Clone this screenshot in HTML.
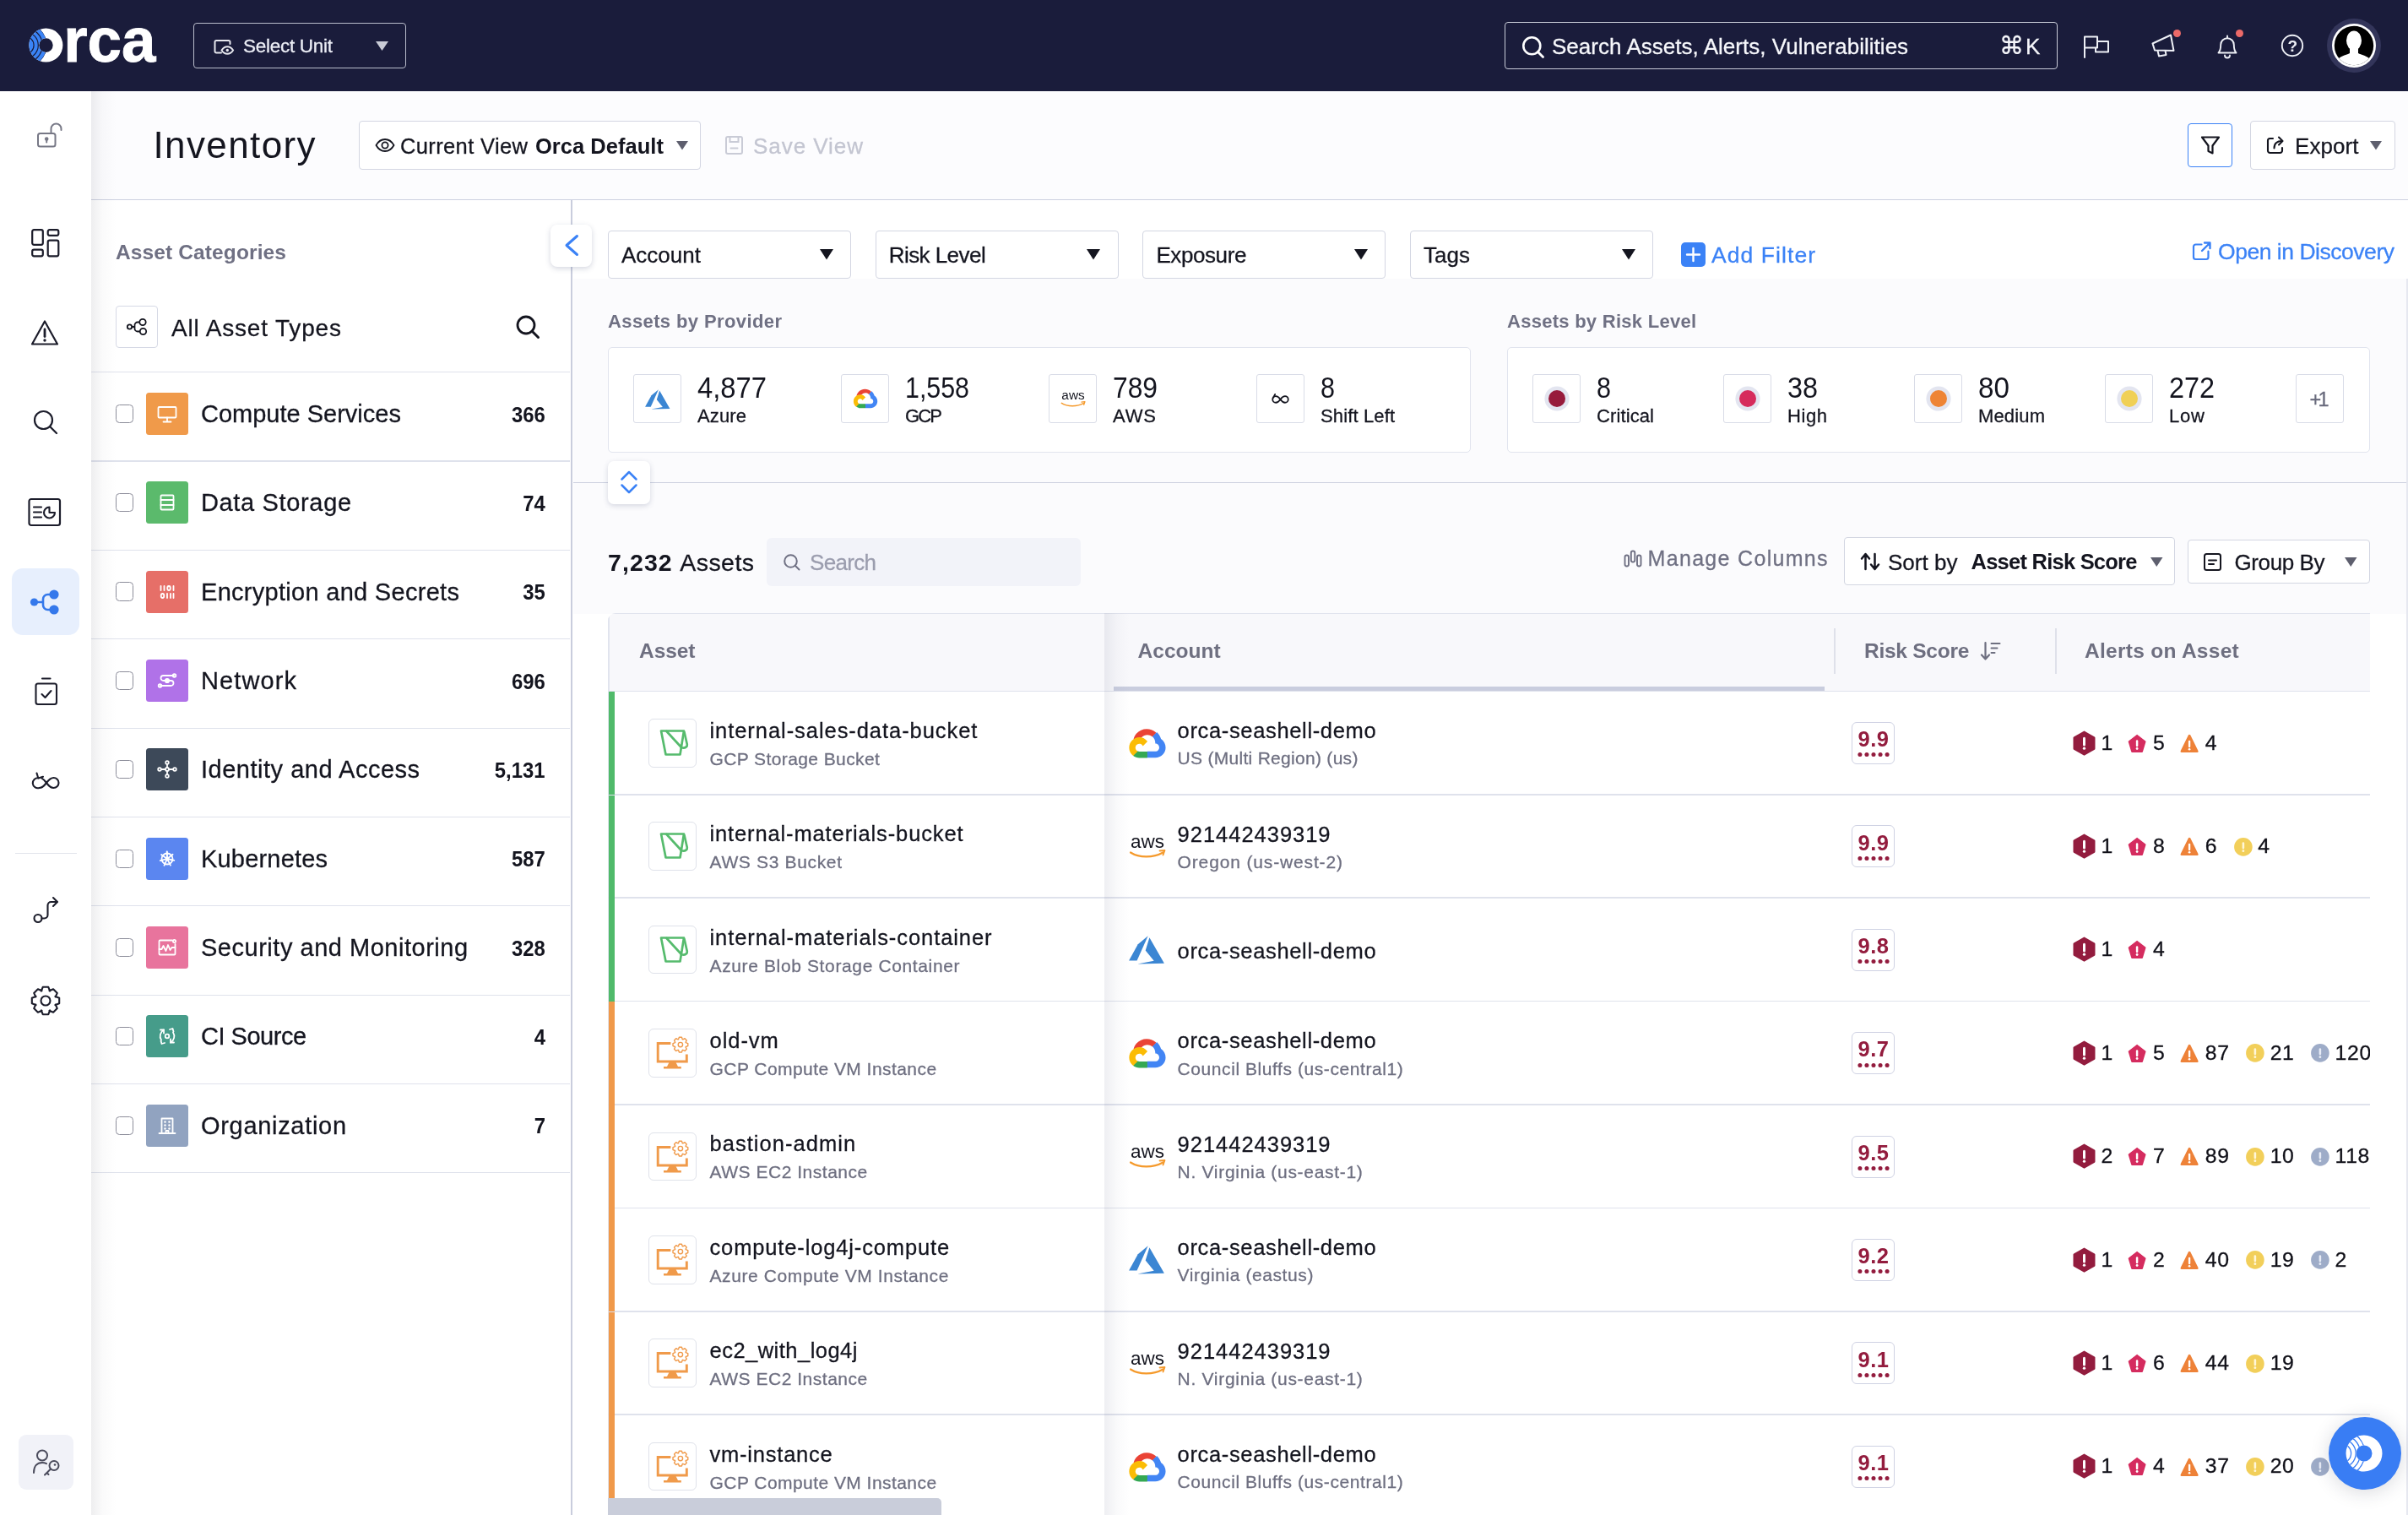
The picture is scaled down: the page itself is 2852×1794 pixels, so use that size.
<!DOCTYPE html>
<html lang="en"><head><meta charset="utf-8"><title>Inventory - Orca</title><style>
*{margin:0;padding:0}
html,body{width:2852px;height:1794px;overflow:hidden;background:#fff}
body{position:relative;will-change:transform;font-family:"Liberation Sans",Arial,sans-serif;color:#14151f}
.t{position:absolute;white-space:nowrap;line-height:1;font-weight:400;margin:0}
h1.t,h2.t,h3.t{font-weight:400}
svg{display:block;overflow:visible}
@media (max-width:1600px){html{zoom:.5}}
</style></head>
<body>
<div style="position:absolute;left:678.5px;top:237px;width:2173.5px;height:92.5px;background:#fff;"></div>
<div style="position:absolute;left:678.5px;top:329.5px;width:2173.5px;height:397px;background:#fbfbfd;"></div>
<div style="position:absolute;left:720px;top:273px;width:288px;height:56.5px;border:1.5px solid #d3d6e2;border-radius:4px;box-sizing:border-box;background:#fff;"></div>
<span class="t" style="top:289px;font-size:26px;left:736px;-webkit-text-stroke:.28px;color:#14151f;">Account</span>
<svg style="position:absolute;left:970.5px;top:295px;" width="16" height="12.5" viewBox="0 0 16 12.5" fill="none"><path d="M0 0H16L8 12.5Z" fill="#14151f"/></svg>
<div style="position:absolute;left:1036.7px;top:273px;width:288px;height:56.5px;border:1.5px solid #d3d6e2;border-radius:4px;box-sizing:border-box;background:#fff;"></div>
<span class="t" style="top:289px;font-size:26px;left:1052.7px;letter-spacing:-0.55px;-webkit-text-stroke:.28px;color:#14151f;">Risk Level</span>
<svg style="position:absolute;left:1287.2px;top:295px;" width="16" height="12.5" viewBox="0 0 16 12.5" fill="none"><path d="M0 0H16L8 12.5Z" fill="#14151f"/></svg>
<div style="position:absolute;left:1353.4px;top:273px;width:288px;height:56.5px;border:1.5px solid #d3d6e2;border-radius:4px;box-sizing:border-box;background:#fff;"></div>
<span class="t" style="top:289px;font-size:26px;left:1369.4px;letter-spacing:-0.41px;-webkit-text-stroke:.28px;color:#14151f;">Exposure</span>
<svg style="position:absolute;left:1603.9px;top:295px;" width="16" height="12.5" viewBox="0 0 16 12.5" fill="none"><path d="M0 0H16L8 12.5Z" fill="#14151f"/></svg>
<div style="position:absolute;left:1670.1px;top:273px;width:288px;height:56.5px;border:1.5px solid #d3d6e2;border-radius:4px;box-sizing:border-box;background:#fff;"></div>
<span class="t" style="top:289px;font-size:26px;left:1686.1px;letter-spacing:0.03px;-webkit-text-stroke:.28px;color:#14151f;">Tags</span>
<svg style="position:absolute;left:1920.6px;top:295px;" width="16" height="12.5" viewBox="0 0 16 12.5" fill="none"><path d="M0 0H16L8 12.5Z" fill="#14151f"/></svg>
<div style="position:absolute;left:1991px;top:287px;width:29px;height:29px;background:#3b82f6;border-radius:5px;"></div>
<svg style="position:absolute;left:1991px;top:287px;" width="29" height="29" viewBox="0 0 29 29" fill="none"><path d="M14.5 7V22M7 14.5H22" stroke="#fff" stroke-width="2.4" stroke-linecap="round"/></svg>
<span class="t" style="top:288.6px;font-size:26.5px;left:2027px;letter-spacing:1.07px;-webkit-text-stroke:.28px;color:#3b82f6;">Add Filter</span>
<svg style="position:absolute;left:2595px;top:285px;" width="25" height="25" viewBox="0 0 25 25" fill="none"><path d="M12.5 4.5H5.5A2.5 2.5 0 0 0 3 7v12.5A2.5 2.5 0 0 0 5.5 22H18a2.5 2.5 0 0 0 2.5-2.5V12.5" stroke="#3b82f6" stroke-width="2.2" stroke-linecap="round"/><path d="M16 2.5H22.5V9M22 3L13 12" stroke="#3b82f6" stroke-width="2.4" stroke-linecap="round" stroke-linejoin="round"/></svg>
<span class="t" style="top:285.1px;font-size:26.5px;left:2627px;letter-spacing:-0.47px;-webkit-text-stroke:.28px;color:#3b82f6;">Open in Discovery</span>
<h3 class="t" style="top:369.9px;font-size:22px;left:720px;letter-spacing:0.39px;font-weight:700;color:#6f7083;">Assets by Provider</h3>
<h3 class="t" style="top:369.9px;font-size:22px;left:1785px;letter-spacing:0.27px;font-weight:700;color:#6f7083;">Assets by Risk Level</h3>
<div style="position:absolute;left:720px;top:411px;width:1021.5px;height:124.5px;border:1.5px solid #e1e4ee;border-radius:5px;box-sizing:border-box;background:#fff;"></div>
<div style="position:absolute;left:1785px;top:411px;width:1021.5px;height:124.5px;border:1.5px solid #e1e4ee;border-radius:5px;box-sizing:border-box;background:#fff;"></div>
<div style="position:absolute;left:750px;top:443px;width:57px;height:57.5px;border:1.5px solid #d9dce7;border-radius:3px;box-sizing:border-box;background:#fff;"></div>
<svg style="position:absolute;left:764px;top:460.5px;" width="29.5" height="23.9" viewBox="0 0 42 34" fill="none"><path d="M22.7 .3L10.7 10.2L.1 29.6L9.6 29.4Z" fill="#3b86d3"/><path d="M24.4 2.3L41.9 32.8L10.3 33.5L29.7 29.8L19.7 17.6Z" fill="#3b86d3"/></svg>
<span class="t" style="top:441.3px;font-size:35px;left:826px;color:#14151f;transform:scaleX(0.9362);transform-origin:0 0;">4,877</span>
<span class="t" style="top:482.2px;font-size:22px;left:826px;letter-spacing:0.13px;-webkit-text-stroke:.28px;color:#14151f;">Azure</span>
<div style="position:absolute;left:996px;top:443px;width:57px;height:57.5px;border:1.5px solid #d9dce7;border-radius:3px;box-sizing:border-box;background:#fff;"></div>
<svg style="position:absolute;left:1009.5px;top:459.5px;" width="30" height="24.5" viewBox="0 0 44 36" fill="none"><path d="M28 10.2l3.6-3.6.2-1.5C25.3-.8 14.9 0 9.5 6.5 8 8.3 6.9 10.5 6.3 12.8l1.3-.2 7.2-1.2.6-.6c3.2-3.5 8.6-4 12.3-1z" fill="#ea4335"/>
<path d="M37.7 12.8c-.8-3-2.5-5.8-4.9-7.9l-5 5c2.1 1.7 3.3 4.3 3.3 7v.9c2.5 0 4.5 2 4.5 4.5s-2 4.5-4.5 4.5h-9l-.9.9v5.4l.9.9h9c6.5 0 11.8-5.1 11.8-11.6 0-3.9-1.9-7.6-5.2-9.8z" fill="#4285f4"/>
<path d="M13 34.1h9v-7.2h-9c-.6 0-1.3-.1-1.9-.4l-1.3.4-3.6 3.6-.3 1.2c2 1.5 4.5 2.4 7.1 2.4z" fill="#34a853"/>
<path d="M13 10.7C6.5 10.8 1.3 16.1 1.3 22.6c0 3.6 1.7 7 4.6 9.2l5.2-5.2c-2.3-1-3.3-3.7-2.3-5.9 1-2.3 3.7-3.3 5.9-2.3 1 .5 1.8 1.3 2.3 2.3l5.2-5.2C20 12.5 16.6 10.7 13 10.7z" fill="#fbbc05"/></svg>
<span class="t" style="top:441.3px;font-size:35px;left:1072px;color:#14151f;transform:scaleX(0.8677);transform-origin:0 0;">1,558</span>
<span class="t" style="top:482.2px;font-size:22px;left:1072px;letter-spacing:-1.84px;-webkit-text-stroke:.28px;color:#14151f;">GCP</span>
<div style="position:absolute;left:1242px;top:443px;width:57px;height:57.5px;border:1.5px solid #d9dce7;border-radius:3px;box-sizing:border-box;background:#fff;"></div>
<svg style="position:absolute;left:1255.5px;top:460px;" width="30" height="23.2" viewBox="0 0 44 34" fill="none"><text x="22" y="19.5" text-anchor="middle" font-family="Liberation Sans, sans-serif" font-size="22.5" fill="#14151f" textLength="40" lengthAdjust="spacingAndGlyphs">aws</text><path d="M2 25.5C12 32 29 32 40.5 25.5" stroke="#f59a2c" stroke-width="2.2" fill="none" stroke-linecap="round"/><path d="M36.5 23.5L42.5 23L40.5 28.5" stroke="#f59a2c" stroke-width="1.8" fill="none" stroke-linecap="round" stroke-linejoin="round"/></svg>
<span class="t" style="top:441.3px;font-size:35px;left:1318px;color:#14151f;transform:scaleX(0.9076);transform-origin:0 0;">789</span>
<span class="t" style="top:482.2px;font-size:22px;left:1318px;letter-spacing:0.85px;-webkit-text-stroke:.28px;color:#14151f;">AWS</span>
<div style="position:absolute;left:1488px;top:443px;width:57px;height:57.5px;border:1.5px solid #d9dce7;border-radius:3px;box-sizing:border-box;background:#fff;"></div>
<svg style="position:absolute;left:1505px;top:464px;" width="23" height="16.6" viewBox="0 0 36 26" fill="none"><path d="M18 14c-3 4-5 6-8.5 6a6 6 0 0 1 0-12c3.5 0 5.5 2 8.5 6s5 6 8.5 6a6 6 0 0 0 0-12c-3.5 0-5.5 2-8.5 6Z" stroke="#14151f" stroke-width="2.8" stroke-linejoin="round"/><path d="M5 10.5L8 4.5" stroke="#14151f" stroke-width="2.8" stroke-linecap="round"/></svg>
<span class="t" style="top:441.3px;font-size:35px;left:1564px;color:#14151f;transform:scaleX(0.8733);transform-origin:0 0;">8</span>
<span class="t" style="top:482.2px;font-size:22px;left:1564px;letter-spacing:0.13px;-webkit-text-stroke:.28px;color:#14151f;">Shift Left</span>
<div style="position:absolute;left:1815px;top:443px;width:57px;height:57.5px;border:1.5px solid #d9dce7;border-radius:3px;box-sizing:border-box;background:#fff;"></div>
<svg style="position:absolute;left:1828.5px;top:457px;" width="30" height="30" viewBox="0 0 30 30" fill="none"><circle cx="15" cy="15" r="14.6" fill="#e3e5f0"/><circle cx="15" cy="15" r="10" fill="#971b3c"/></svg>
<span class="t" style="top:441.3px;font-size:35px;left:1891px;color:#14151f;transform:scaleX(0.8733);transform-origin:0 0;">8</span>
<span class="t" style="top:482.2px;font-size:22px;left:1891px;letter-spacing:0.11px;-webkit-text-stroke:.28px;color:#14151f;">Critical</span>
<div style="position:absolute;left:2041px;top:443px;width:57px;height:57.5px;border:1.5px solid #d9dce7;border-radius:3px;box-sizing:border-box;background:#fff;"></div>
<svg style="position:absolute;left:2054.5px;top:457px;" width="30" height="30" viewBox="0 0 30 30" fill="none"><circle cx="15" cy="15" r="14.6" fill="#e3e5f0"/><circle cx="15" cy="15" r="10" fill="#d62b5c"/></svg>
<span class="t" style="top:441.3px;font-size:35px;left:2117px;color:#14151f;transform:scaleX(0.9247);transform-origin:0 0;">38</span>
<span class="t" style="top:482.2px;font-size:22px;left:2117px;letter-spacing:0.58px;-webkit-text-stroke:.28px;color:#14151f;">High</span>
<div style="position:absolute;left:2267px;top:443px;width:57px;height:57.5px;border:1.5px solid #d9dce7;border-radius:3px;box-sizing:border-box;background:#fff;"></div>
<svg style="position:absolute;left:2280.5px;top:457px;" width="30" height="30" viewBox="0 0 30 30" fill="none"><circle cx="15" cy="15" r="14.6" fill="#e3e5f0"/><circle cx="15" cy="15" r="10" fill="#ee8435"/></svg>
<span class="t" style="top:441.3px;font-size:35px;left:2343px;color:#14151f;transform:scaleX(0.9504);transform-origin:0 0;">80</span>
<span class="t" style="top:482.2px;font-size:22px;left:2343px;letter-spacing:0.15px;-webkit-text-stroke:.28px;color:#14151f;">Medium</span>
<div style="position:absolute;left:2493px;top:443px;width:57px;height:57.5px;border:1.5px solid #d9dce7;border-radius:3px;box-sizing:border-box;background:#fff;"></div>
<svg style="position:absolute;left:2506.5px;top:457px;" width="30" height="30" viewBox="0 0 30 30" fill="none"><circle cx="15" cy="15" r="14.6" fill="#e3e5f0"/><circle cx="15" cy="15" r="10" fill="#f0d056"/></svg>
<span class="t" style="top:441.3px;font-size:35px;left:2569px;color:#14151f;transform:scaleX(0.9247);transform-origin:0 0;">272</span>
<span class="t" style="top:482.2px;font-size:22px;left:2569px;letter-spacing:0.82px;-webkit-text-stroke:.28px;color:#14151f;">Low</span>
<div style="position:absolute;left:2719px;top:443px;width:57px;height:57.5px;border:1.5px solid #d9dce7;border-radius:3px;box-sizing:border-box;background:#fff;"></div>
<span class="t" style="top:461.6px;font-size:23.5px;left:2735.5px;letter-spacing:-3.79px;-webkit-text-stroke:.28px;color:#686a7c;">+1</span>
<div style="position:absolute;left:678.5px;top:571.2px;width:2171.5px;height:1.2px;background:#cdd1e0;"></div>
<div style="position:absolute;left:2850px;top:329.5px;width:2px;height:1464.5px;background:#e6e8f0;"></div>
<div style="position:absolute;left:720px;top:546px;width:49.5px;height:50.5px;background:#fff;border-radius:7px;box-shadow:0 2px 6px rgba(60,70,110,.2);"></div>
<svg style="position:absolute;left:734px;top:556px;" width="22" height="30" viewBox="0 0 22 30" fill="none"><path d="M2.5 11.5L11 3L19.5 11.5M2.5 18.5L11 27L19.5 18.5" stroke="#3b82f6" stroke-width="2.5" stroke-linecap="round" stroke-linejoin="round"/></svg>
<span class="t" style="top:651.9px;font-size:28.5px;left:720px;letter-spacing:1.1px;font-weight:700;color:#14151f;">7,232</span>
<span class="t" style="top:651.9px;font-size:28.5px;left:805.3px;letter-spacing:0.43px;-webkit-text-stroke:.28px;color:#14151f;">Assets</span>
<div style="position:absolute;left:908px;top:636.5px;width:372px;height:57px;background:#f2f3f9;border-radius:6px;"></div>
<svg style="position:absolute;left:927px;top:655px;" width="22" height="22" viewBox="0 0 22 22" fill="none"><circle cx="9.5" cy="9.5" r="7.3" stroke="#6f7083" stroke-width="2"/><path d="M15 15L19.5 19.5" stroke="#6f7083" stroke-width="2" stroke-linecap="round"/></svg>
<span class="t" style="top:653px;font-size:26px;left:959px;letter-spacing:-0.68px;-webkit-text-stroke:.28px;color:#9b9dae;">Search</span>
<svg style="position:absolute;left:1922px;top:650px;" width="24" height="24" viewBox="0 0 24 24" fill="none"><g stroke="#6f7083" stroke-width="1.9" fill="none"><rect x="2.5" y="7.5" width="4.5" height="13" rx="2.2"/><rect x="9.8" y="2.5" width="4.5" height="13" rx="2.2"/><rect x="17" y="7.5" width="4.5" height="13" rx="2.2"/></g></svg>
<span class="t" style="top:649.3px;font-size:25px;left:1951.6px;letter-spacing:1.31px;-webkit-text-stroke:.28px;color:#6f7083;">Manage Columns</span>
<div style="position:absolute;left:2184px;top:635.8px;width:391.5px;height:57.5px;border:1.5px solid #d3d6e2;border-radius:4px;box-sizing:border-box;background:#fff;"></div>
<svg style="position:absolute;left:2203px;top:653px;" width="24" height="24" viewBox="0 0 24 24" fill="none"><path d="M6.5 21V4M2 8.5L6.5 3L11 8.5M17.5 3V20M13 15.5L17.5 21L22 15.5" stroke="#14151f" stroke-width="2.5" stroke-linecap="round" stroke-linejoin="round"/></svg>
<span class="t" style="top:652.5px;font-size:26px;left:2236px;letter-spacing:0.02px;-webkit-text-stroke:.28px;color:#14151f;">Sort by</span>
<span class="t" style="top:652.9px;font-size:25.5px;left:2334.5px;letter-spacing:-0.76px;font-weight:700;color:#14151f;">Asset Risk Score</span>
<svg style="position:absolute;left:2547px;top:660px;" width="14.5" height="11" viewBox="0 0 14.5 11" fill="none"><path d="M0 0H14.5L7.25 11Z" fill="#5e5f6e"/></svg>
<div style="position:absolute;left:2591px;top:639px;width:215.5px;height:51.5px;border:1.5px solid #d3d6e2;border-radius:4px;box-sizing:border-box;background:#fff;"></div>
<svg style="position:absolute;left:2608.5px;top:654px;" width="23" height="23" viewBox="0 0 23 23" fill="none"><rect x="2" y="2" width="19" height="19" rx="2.5" stroke="#14151f" stroke-width="2"/><path d="M7 9.5H16M7 14H13" stroke="#14151f" stroke-width="2" stroke-linecap="round"/></svg>
<span class="t" style="top:653px;font-size:26px;left:2646.5px;letter-spacing:-0.4px;-webkit-text-stroke:.28px;color:#14151f;">Group By</span>
<svg style="position:absolute;left:2777px;top:660px;" width="14.5" height="11" viewBox="0 0 14.5 11" fill="none"><path d="M0 0H14.5L7.25 11Z" fill="#5e5f6e"/></svg>
<div style="position:absolute;left:720px;top:725.7px;width:2086.5px;height:1068.3px;overflow:hidden;border-top-left-radius:9px;background:#fff;">
<div style="position:absolute;left:0px;top:0px;width:2086.5px;height:92.7px;background:#f8f8fb;border-top:1.5px solid #e1e4ee;box-sizing:border-box;"></div>
<div style="position:absolute;left:0px;top:0px;width:1.5px;height:1100px;background:#e1e4ee;"></div>
<div style="position:absolute;left:1452px;top:18.3px;width:2px;height:54px;background:#dfe1ea;"></div>
<div style="position:absolute;left:1713.5px;top:18.3px;width:2px;height:54px;background:#dfe1ea;"></div>
<span class="t" style="top:33.6px;font-size:24.5px;left:37px;letter-spacing:-0.06px;font-weight:700;color:#6e6f80;">Asset</span>
<span class="t" style="top:33.6px;font-size:24.5px;left:627.5px;letter-spacing:0.03px;font-weight:700;color:#6e6f80;">Account</span>
<span class="t" style="top:33.6px;font-size:24.5px;left:1488px;letter-spacing:-0.26px;font-weight:700;color:#6e6f80;">Risk Score</span>
<svg style="position:absolute;left:1625px;top:32.3px;" width="25" height="26" viewBox="0 0 25 26" fill="none"><path d="M6.5 3V22M2 17.5L6.5 22.5L11 17.5" stroke="#6e6f80" stroke-width="2.2" stroke-linecap="round" stroke-linejoin="round" fill="none"/><path d="M13.5 4H23.5M13.5 9.5H20.5M13.5 15H17.5" stroke="#6e6f80" stroke-width="2" stroke-linecap="round"/></svg>
<span class="t" style="top:33.6px;font-size:24.5px;left:1749px;letter-spacing:0.28px;font-weight:700;color:#6e6f80;">Alerts on Asset</span>
<div style="position:absolute;left:0px;top:92px;width:2086.5px;height:1.5px;background:#dfe2ec;"></div>
<div style="position:absolute;left:599px;top:87.1px;width:842px;height:5.6px;background:#c9cdde;"></div>
<div style="position:absolute;left:0px;top:214.4px;width:2086.5px;height:1.5px;background:#dfe2ec;"></div>
<div style="position:absolute;left:0.7px;top:93.5px;width:7.3px;height:122.3px;background:#50ba6a;"></div>
<div style="position:absolute;left:48.2px;top:125.4px;width:56.5px;height:57.5px;border:1.5px solid #dfe2ea;border-radius:6px;box-sizing:border-box;background:#fff;"></div>
<svg style="position:absolute;left:48.2px;top:125.4px;" width="56.5" height="57.5" viewBox="0 0 56.5 57.5" fill="none"><g stroke="#56bb6d" stroke-width="2.7" fill="none" stroke-linejoin="round" stroke-linecap="round"><path d="M15 14.5H42L37.5 42.5H20.5Z"/><path d="M21.5 15L38.5 33.5"/><path d="M42.5 16L45.8 30.5c.500 2.5-2 4.5-5.5 4"/></g></svg>
<span class="t" style="top:127.1px;font-size:25.5px;left:120.5px;letter-spacing:0.94px;-webkit-text-stroke:.28px;color:#14151f;">internal-sales-data-bucket</span>
<span class="t" style="top:162.2px;font-size:21px;left:120.5px;letter-spacing:0.4px;-webkit-text-stroke:.28px;color:#6e6f80;">GCP Storage Bucket</span>
<svg style="position:absolute;left:615.6px;top:136.1px;" width="45.7" height="37.4" viewBox="0 0 44 36" fill="none"><path d="M28 10.2l3.6-3.6.2-1.5C25.3-.8 14.9 0 9.5 6.5 8 8.3 6.9 10.5 6.3 12.8l1.3-.2 7.2-1.2.6-.6c3.2-3.5 8.6-4 12.3-1z" fill="#ea4335"/>
<path d="M37.7 12.8c-.8-3-2.5-5.8-4.9-7.9l-5 5c2.1 1.7 3.3 4.3 3.3 7v.9c2.5 0 4.5 2 4.5 4.5s-2 4.5-4.5 4.5h-9l-.9.9v5.4l.9.9h9c6.5 0 11.8-5.1 11.8-11.6 0-3.9-1.9-7.6-5.2-9.8z" fill="#4285f4"/>
<path d="M13 34.1h9v-7.2h-9c-.6 0-1.3-.1-1.9-.4l-1.3.4-3.6 3.6-.3 1.2c2 1.5 4.5 2.4 7.1 2.4z" fill="#34a853"/>
<path d="M13 10.7C6.5 10.8 1.3 16.1 1.3 22.6c0 3.6 1.7 7 4.6 9.2l5.2-5.2c-2.3-1-3.3-3.7-2.3-5.9 1-2.3 3.7-3.3 5.9-2.3 1 .5 1.8 1.3 2.3 2.3l5.2-5.2C20 12.5 16.6 10.7 13 10.7z" fill="#fbbc05"/></svg>
<span class="t" style="top:127.6px;font-size:25.5px;left:674.6px;letter-spacing:0.65px;-webkit-text-stroke:.28px;color:#14151f;">orca-seashell-demo</span>
<span class="t" style="top:161.8px;font-size:21px;left:674.6px;letter-spacing:0.29px;-webkit-text-stroke:.28px;color:#6e6f80;">US (Multi Region) (us)</span>
<div style="position:absolute;left:1473.2px;top:129.3px;width:51px;height:50px;border:1.5px solid #cfd2e3;border-radius:6px;box-sizing:border-box;background:#fff;"></div>
<span class="t" style="top:137.6px;font-size:25.5px;left:1480.6px;letter-spacing:0.43px;font-weight:700;color:#931c3e;">9.9</span>
<svg style="position:absolute;left:1480px;top:165.7px;" width="38" height="5" viewBox="0 0 37.2 5" fill="none"><circle cx="2.5" cy="2.5" r="2.5" fill="#931c3e"/><circle cx="10.55" cy="2.5" r="2.5" fill="#931c3e"/><circle cx="18.6" cy="2.5" r="2.5" fill="#931c3e"/><circle cx="26.65" cy="2.5" r="2.5" fill="#931c3e"/><circle cx="34.7" cy="2.5" r="2.5" fill="#931c3e"/></svg>
<svg style="position:absolute;left:1735px;top:139px;" width="27" height="30.4" viewBox="0 0 27 30.4" fill="none"><path d="M13.5 .600L25.8 7.6Q26.5 8 26.5 8.8V21.6Q26.5 22.4 25.8 22.8L13.5 29.8L1.2 22.8Q.500 22.4 .500 21.6V8.8Q.500 8 1.2 7.6Z" fill="#931c3e"/><path d="M13.5 9.2V17" stroke="#fff" stroke-width="3" stroke-linecap="round"/><circle cx="13.5" cy="21.2" r="1.65" fill="#fff"/></svg>
<span class="t" style="top:142px;font-size:24.8px;left:1768.4px;letter-spacing:0.6px;-webkit-text-stroke:.28px;color:#101018;">1</span>
<svg style="position:absolute;left:1800.4px;top:143px;" width="22.2" height="22.8" viewBox="0 0 21.4 22" fill="none"><path d="M10.7 .800L20.4 8.2Q20.9 8.6 20.7 9.2L17.3 20.6Q17.1 21.3 16.4 21.3H5Q4.3 21.3 4.1 20.6L.700 9.2Q.500 8.6 1 8.2Z" fill="#d52c5f"/><path d="M10.7 8.3V13.54" stroke="#fff" stroke-width="2.4" stroke-linecap="round"/><circle cx="10.7" cy="16.9" r="1.35" fill="#fff"/></svg>
<span class="t" style="top:142px;font-size:24.8px;left:1830.1px;letter-spacing:0.6px;-webkit-text-stroke:.28px;color:#101018;">5</span>
<svg style="position:absolute;left:1862.1px;top:143.1px;" width="22.2" height="22.6" viewBox="0 0 21.6 22" fill="none"><path d="M10.8 1.2Q11.4 .400 12 1.4L21 19.8Q21.5 21.3 20 21.4H1.6Q.100 21.3 .600 19.8L9.6 1.4Q10.2 .400 10.8 1.2Z" fill="#ee8238"/><path d="M10.8 8.6V14.58" stroke="#fff" stroke-width="2.3" stroke-linecap="round"/><circle cx="10.8" cy="17.8" r="1.3" fill="#fff"/></svg>
<span class="t" style="top:142px;font-size:24.8px;left:1891.8px;letter-spacing:0.6px;-webkit-text-stroke:.28px;color:#101018;">4</span>
<div style="position:absolute;left:0px;top:336.8px;width:2086.5px;height:1.5px;background:#dfe2ec;"></div>
<div style="position:absolute;left:0.7px;top:215.9px;width:7.3px;height:122.3px;background:#50ba6a;"></div>
<div style="position:absolute;left:48.2px;top:247.8px;width:56.5px;height:57.5px;border:1.5px solid #dfe2ea;border-radius:6px;box-sizing:border-box;background:#fff;"></div>
<svg style="position:absolute;left:48.2px;top:247.8px;" width="56.5" height="57.5" viewBox="0 0 56.5 57.5" fill="none"><g stroke="#56bb6d" stroke-width="2.7" fill="none" stroke-linejoin="round" stroke-linecap="round"><path d="M15 14.5H42L37.5 42.5H20.5Z"/><path d="M21.5 15L38.5 33.5"/><path d="M42.5 16L45.8 30.5c.500 2.5-2 4.5-5.5 4"/></g></svg>
<span class="t" style="top:249.5px;font-size:25.5px;left:120.5px;letter-spacing:0.87px;-webkit-text-stroke:.28px;color:#14151f;">internal-materials-bucket</span>
<span class="t" style="top:284.6px;font-size:21px;left:120.5px;letter-spacing:0.66px;-webkit-text-stroke:.28px;color:#6e6f80;">AWS S3 Bucket</span>
<svg style="position:absolute;left:617px;top:258.6px;" width="44" height="34" viewBox="0 0 44 34" fill="none"><text x="22" y="19.5" text-anchor="middle" font-family="Liberation Sans, sans-serif" font-size="22.5" fill="#14151f" textLength="40" lengthAdjust="spacingAndGlyphs">aws</text><path d="M2 25.5C12 32 29 32 40.5 25.5" stroke="#f59a2c" stroke-width="2.2" fill="none" stroke-linecap="round"/><path d="M36.5 23.5L42.5 23L40.5 28.5" stroke="#f59a2c" stroke-width="1.8" fill="none" stroke-linecap="round" stroke-linejoin="round"/></svg>
<span class="t" style="top:250px;font-size:25.5px;left:674.6px;letter-spacing:0.98px;-webkit-text-stroke:.28px;color:#14151f;">921442439319</span>
<span class="t" style="top:284.2px;font-size:21px;left:674.6px;letter-spacing:0.85px;-webkit-text-stroke:.28px;color:#6e6f80;">Oregon (us-west-2)</span>
<div style="position:absolute;left:1473.2px;top:251.7px;width:51px;height:50px;border:1.5px solid #cfd2e3;border-radius:6px;box-sizing:border-box;background:#fff;"></div>
<span class="t" style="top:260px;font-size:25.5px;left:1480.6px;letter-spacing:0.43px;font-weight:700;color:#931c3e;">9.9</span>
<svg style="position:absolute;left:1480px;top:288.1px;" width="38" height="5" viewBox="0 0 37.2 5" fill="none"><circle cx="2.5" cy="2.5" r="2.5" fill="#931c3e"/><circle cx="10.55" cy="2.5" r="2.5" fill="#931c3e"/><circle cx="18.6" cy="2.5" r="2.5" fill="#931c3e"/><circle cx="26.65" cy="2.5" r="2.5" fill="#931c3e"/><circle cx="34.7" cy="2.5" r="2.5" fill="#931c3e"/></svg>
<svg style="position:absolute;left:1735px;top:261.4px;" width="27" height="30.4" viewBox="0 0 27 30.4" fill="none"><path d="M13.5 .600L25.8 7.6Q26.5 8 26.5 8.8V21.6Q26.5 22.4 25.8 22.8L13.5 29.8L1.2 22.8Q.500 22.4 .500 21.6V8.8Q.500 8 1.2 7.6Z" fill="#931c3e"/><path d="M13.5 9.2V17" stroke="#fff" stroke-width="3" stroke-linecap="round"/><circle cx="13.5" cy="21.2" r="1.65" fill="#fff"/></svg>
<span class="t" style="top:264.4px;font-size:24.8px;left:1768.4px;letter-spacing:0.6px;-webkit-text-stroke:.28px;color:#101018;">1</span>
<svg style="position:absolute;left:1800.4px;top:265.4px;" width="22.2" height="22.8" viewBox="0 0 21.4 22" fill="none"><path d="M10.7 .800L20.4 8.2Q20.9 8.6 20.7 9.2L17.3 20.6Q17.1 21.3 16.4 21.3H5Q4.3 21.3 4.1 20.6L.700 9.2Q.500 8.6 1 8.2Z" fill="#d52c5f"/><path d="M10.7 8.3V13.54" stroke="#fff" stroke-width="2.4" stroke-linecap="round"/><circle cx="10.7" cy="16.9" r="1.35" fill="#fff"/></svg>
<span class="t" style="top:264.4px;font-size:24.8px;left:1830.1px;letter-spacing:0.6px;-webkit-text-stroke:.28px;color:#101018;">8</span>
<svg style="position:absolute;left:1862.1px;top:265.5px;" width="22.2" height="22.6" viewBox="0 0 21.6 22" fill="none"><path d="M10.8 1.2Q11.4 .400 12 1.4L21 19.8Q21.5 21.3 20 21.4H1.6Q.100 21.3 .600 19.8L9.6 1.4Q10.2 .400 10.8 1.2Z" fill="#ee8238"/><path d="M10.8 8.6V14.58" stroke="#fff" stroke-width="2.3" stroke-linecap="round"/><circle cx="10.8" cy="17.8" r="1.3" fill="#fff"/></svg>
<span class="t" style="top:264.4px;font-size:24.8px;left:1891.8px;letter-spacing:0.6px;-webkit-text-stroke:.28px;color:#101018;">6</span>
<svg style="position:absolute;left:1925.7px;top:266px;" width="21.8" height="21.8" viewBox="0 0 21.4 21.4" fill="none"><circle cx="10.7" cy="10.7" r="10.6" fill="#f2cf5a"/><path d="M10.7 6.4V11.9" stroke="#fff6d8" stroke-width="2.5" stroke-linecap="round"/><circle cx="10.7" cy="15.4" r="1.4" fill="#fff6d8"/></svg>
<span class="t" style="top:264.4px;font-size:24.8px;left:1954.3px;letter-spacing:0.6px;-webkit-text-stroke:.28px;color:#101018;">4</span>
<div style="position:absolute;left:0px;top:459.2px;width:2086.5px;height:1.5px;background:#dfe2ec;"></div>
<div style="position:absolute;left:0.7px;top:338.3px;width:7.3px;height:122.3px;background:#50ba6a;"></div>
<div style="position:absolute;left:48.2px;top:370.2px;width:56.5px;height:57.5px;border:1.5px solid #dfe2ea;border-radius:6px;box-sizing:border-box;background:#fff;"></div>
<svg style="position:absolute;left:48.2px;top:370.2px;" width="56.5" height="57.5" viewBox="0 0 56.5 57.5" fill="none"><g stroke="#56bb6d" stroke-width="2.7" fill="none" stroke-linejoin="round" stroke-linecap="round"><path d="M15 14.5H42L37.5 42.5H20.5Z"/><path d="M21.5 15L38.5 33.5"/><path d="M42.5 16L45.8 30.5c.500 2.5-2 4.5-5.5 4"/></g></svg>
<span class="t" style="top:371.9px;font-size:25.5px;left:120.5px;letter-spacing:0.93px;-webkit-text-stroke:.28px;color:#14151f;">internal-materials-container</span>
<span class="t" style="top:407px;font-size:21px;left:120.5px;letter-spacing:0.63px;-webkit-text-stroke:.28px;color:#6e6f80;">Azure Blob Storage Container</span>
<svg style="position:absolute;left:617px;top:382.5px;" width="42" height="34" viewBox="0 0 42 34" fill="none"><path d="M22.7 .3L10.7 10.2L.1 29.6L9.6 29.4Z" fill="#3b86d3"/><path d="M24.4 2.3L41.9 32.8L10.3 33.5L29.7 29.8L19.7 17.6Z" fill="#3b86d3"/></svg>
<span class="t" style="top:388.1px;font-size:25.5px;left:674.6px;letter-spacing:0.65px;-webkit-text-stroke:.28px;color:#14151f;">orca-seashell-demo</span>
<div style="position:absolute;left:1473.2px;top:374.1px;width:51px;height:50px;border:1.5px solid #cfd2e3;border-radius:6px;box-sizing:border-box;background:#fff;"></div>
<span class="t" style="top:382.4px;font-size:25.5px;left:1480.6px;letter-spacing:0.43px;font-weight:700;color:#931c3e;">9.8</span>
<svg style="position:absolute;left:1480px;top:410.5px;" width="38" height="5" viewBox="0 0 37.2 5" fill="none"><circle cx="2.5" cy="2.5" r="2.5" fill="#931c3e"/><circle cx="10.55" cy="2.5" r="2.5" fill="#931c3e"/><circle cx="18.6" cy="2.5" r="2.5" fill="#931c3e"/><circle cx="26.65" cy="2.5" r="2.5" fill="#931c3e"/><circle cx="34.7" cy="2.5" r="2.5" fill="#931c3e"/></svg>
<svg style="position:absolute;left:1735px;top:383.8px;" width="27" height="30.4" viewBox="0 0 27 30.4" fill="none"><path d="M13.5 .600L25.8 7.6Q26.5 8 26.5 8.8V21.6Q26.5 22.4 25.8 22.8L13.5 29.8L1.2 22.8Q.500 22.4 .500 21.6V8.8Q.500 8 1.2 7.6Z" fill="#931c3e"/><path d="M13.5 9.2V17" stroke="#fff" stroke-width="3" stroke-linecap="round"/><circle cx="13.5" cy="21.2" r="1.65" fill="#fff"/></svg>
<span class="t" style="top:386.8px;font-size:24.8px;left:1768.4px;letter-spacing:0.6px;-webkit-text-stroke:.28px;color:#101018;">1</span>
<svg style="position:absolute;left:1800.4px;top:387.8px;" width="22.2" height="22.8" viewBox="0 0 21.4 22" fill="none"><path d="M10.7 .800L20.4 8.2Q20.9 8.6 20.7 9.2L17.3 20.6Q17.1 21.3 16.4 21.3H5Q4.3 21.3 4.1 20.6L.700 9.2Q.500 8.6 1 8.2Z" fill="#d52c5f"/><path d="M10.7 8.3V13.54" stroke="#fff" stroke-width="2.4" stroke-linecap="round"/><circle cx="10.7" cy="16.9" r="1.35" fill="#fff"/></svg>
<span class="t" style="top:386.8px;font-size:24.8px;left:1830.1px;letter-spacing:0.6px;-webkit-text-stroke:.28px;color:#101018;">4</span>
<div style="position:absolute;left:0px;top:581.6px;width:2086.5px;height:1.5px;background:#dfe2ec;"></div>
<div style="position:absolute;left:0.7px;top:460.7px;width:7.3px;height:122.3px;background:#f0994a;"></div>
<div style="position:absolute;left:48.2px;top:492.6px;width:56.5px;height:57.5px;border:1.5px solid #dfe2ea;border-radius:6px;box-sizing:border-box;background:#fff;"></div>
<svg style="position:absolute;left:48.2px;top:492.6px;" width="56.5" height="57.5" viewBox="0 0 56.5 57.5" fill="none"><path d="M26.4 17.5H11.2V39H45.3V30.6" stroke="#f09a4a" stroke-width="2.9" fill="none"/><path d="M24.5 40H32.5L35 45H38.8V47.4H18V45H22Z" fill="#f09a4a"/><path d="M36.38 10.23L39.42 10.23L40.3 12.74L40.71 12.91L43.1 11.75L45.25 13.9L44.09 16.29L44.26 16.7L46.77 17.58L46.77 20.62L44.26 21.5L44.09 21.91L45.25 24.3L43.1 26.45L40.71 25.29L40.3 25.46L39.42 27.97L36.38 27.97L35.5 25.46L35.09 25.29L32.7 26.45L30.55 24.3L31.71 21.91L31.54 21.5L29.03 20.62L29.03 17.58L31.54 16.7L31.71 16.29L30.55 13.9L32.7 11.75L35.09 12.91L35.5 12.74Z" stroke="#f09a4a" stroke-width="1.4" fill="none" stroke-linejoin="round"/><circle cx="37.9" cy="19.1" r="2.7" stroke="#f09a4a" stroke-width="1.4" fill="none"/></svg>
<span class="t" style="top:494.3px;font-size:25.5px;left:120.5px;letter-spacing:0.96px;-webkit-text-stroke:.28px;color:#14151f;">old-vm</span>
<span class="t" style="top:529.4px;font-size:21px;left:120.5px;letter-spacing:0.45px;-webkit-text-stroke:.28px;color:#6e6f80;">GCP Compute VM Instance</span>
<svg style="position:absolute;left:615.6px;top:503.3px;" width="45.7" height="37.4" viewBox="0 0 44 36" fill="none"><path d="M28 10.2l3.6-3.6.2-1.5C25.3-.8 14.9 0 9.5 6.5 8 8.3 6.9 10.5 6.3 12.8l1.3-.2 7.2-1.2.6-.6c3.2-3.5 8.6-4 12.3-1z" fill="#ea4335"/>
<path d="M37.7 12.8c-.8-3-2.5-5.8-4.9-7.9l-5 5c2.1 1.7 3.3 4.3 3.3 7v.9c2.5 0 4.5 2 4.5 4.5s-2 4.5-4.5 4.5h-9l-.9.9v5.4l.9.9h9c6.5 0 11.8-5.1 11.8-11.6 0-3.9-1.9-7.6-5.2-9.8z" fill="#4285f4"/>
<path d="M13 34.1h9v-7.2h-9c-.6 0-1.3-.1-1.9-.4l-1.3.4-3.6 3.6-.3 1.2c2 1.5 4.5 2.4 7.1 2.4z" fill="#34a853"/>
<path d="M13 10.7C6.5 10.8 1.3 16.1 1.3 22.6c0 3.6 1.7 7 4.6 9.2l5.2-5.2c-2.3-1-3.3-3.7-2.3-5.9 1-2.3 3.7-3.3 5.9-2.3 1 .5 1.8 1.3 2.3 2.3l5.2-5.2C20 12.5 16.6 10.7 13 10.7z" fill="#fbbc05"/></svg>
<span class="t" style="top:494.8px;font-size:25.5px;left:674.6px;letter-spacing:0.65px;-webkit-text-stroke:.28px;color:#14151f;">orca-seashell-demo</span>
<span class="t" style="top:529px;font-size:21px;left:674.6px;letter-spacing:0.57px;-webkit-text-stroke:.28px;color:#6e6f80;">Council Bluffs (us-central1)</span>
<div style="position:absolute;left:1473.2px;top:496.5px;width:51px;height:50px;border:1.5px solid #cfd2e3;border-radius:6px;box-sizing:border-box;background:#fff;"></div>
<span class="t" style="top:504.8px;font-size:25.5px;left:1480.6px;letter-spacing:0.43px;font-weight:700;color:#931c3e;">9.7</span>
<svg style="position:absolute;left:1480px;top:532.9px;" width="38" height="5" viewBox="0 0 37.2 5" fill="none"><circle cx="2.5" cy="2.5" r="2.5" fill="#931c3e"/><circle cx="10.55" cy="2.5" r="2.5" fill="#931c3e"/><circle cx="18.6" cy="2.5" r="2.5" fill="#931c3e"/><circle cx="26.65" cy="2.5" r="2.5" fill="#931c3e"/><circle cx="34.7" cy="2.5" r="2.5" fill="#931c3e"/></svg>
<svg style="position:absolute;left:1735px;top:506.2px;" width="27" height="30.4" viewBox="0 0 27 30.4" fill="none"><path d="M13.5 .600L25.8 7.6Q26.5 8 26.5 8.8V21.6Q26.5 22.4 25.8 22.8L13.5 29.8L1.2 22.8Q.500 22.4 .500 21.6V8.8Q.500 8 1.2 7.6Z" fill="#931c3e"/><path d="M13.5 9.2V17" stroke="#fff" stroke-width="3" stroke-linecap="round"/><circle cx="13.5" cy="21.2" r="1.65" fill="#fff"/></svg>
<span class="t" style="top:509.2px;font-size:24.8px;left:1768.4px;letter-spacing:0.6px;-webkit-text-stroke:.28px;color:#101018;">1</span>
<svg style="position:absolute;left:1800.4px;top:510.2px;" width="22.2" height="22.8" viewBox="0 0 21.4 22" fill="none"><path d="M10.7 .800L20.4 8.2Q20.9 8.6 20.7 9.2L17.3 20.6Q17.1 21.3 16.4 21.3H5Q4.3 21.3 4.1 20.6L.700 9.2Q.500 8.6 1 8.2Z" fill="#d52c5f"/><path d="M10.7 8.3V13.54" stroke="#fff" stroke-width="2.4" stroke-linecap="round"/><circle cx="10.7" cy="16.9" r="1.35" fill="#fff"/></svg>
<span class="t" style="top:509.2px;font-size:24.8px;left:1830.1px;letter-spacing:0.6px;-webkit-text-stroke:.28px;color:#101018;">5</span>
<svg style="position:absolute;left:1862.1px;top:510.3px;" width="22.2" height="22.6" viewBox="0 0 21.6 22" fill="none"><path d="M10.8 1.2Q11.4 .400 12 1.4L21 19.8Q21.5 21.3 20 21.4H1.6Q.100 21.3 .600 19.8L9.6 1.4Q10.2 .400 10.8 1.2Z" fill="#ee8238"/><path d="M10.8 8.6V14.58" stroke="#fff" stroke-width="2.3" stroke-linecap="round"/><circle cx="10.8" cy="17.8" r="1.3" fill="#fff"/></svg>
<span class="t" style="top:509.2px;font-size:24.8px;left:1891.8px;letter-spacing:0.6px;-webkit-text-stroke:.28px;color:#101018;">87</span>
<svg style="position:absolute;left:1940.1px;top:510.8px;" width="21.8" height="21.8" viewBox="0 0 21.4 21.4" fill="none"><circle cx="10.7" cy="10.7" r="10.6" fill="#f2cf5a"/><path d="M10.7 6.4V11.9" stroke="#fff6d8" stroke-width="2.5" stroke-linecap="round"/><circle cx="10.7" cy="15.4" r="1.4" fill="#fff6d8"/></svg>
<span class="t" style="top:509.2px;font-size:24.8px;left:1968.7px;letter-spacing:0.6px;-webkit-text-stroke:.28px;color:#101018;">21</span>
<svg style="position:absolute;left:2017px;top:510.8px;" width="21.8" height="21.8" viewBox="0 0 21.4 21.4" fill="none"><circle cx="10.7" cy="10.7" r="10.6" fill="#9eacc8"/><path d="M10.7 6.4V11.9" stroke="#e8ecf6" stroke-width="2.5" stroke-linecap="round"/><circle cx="10.7" cy="15.4" r="1.4" fill="#e8ecf6"/></svg>
<span class="t" style="top:509.2px;font-size:24.8px;left:2045.6px;letter-spacing:0.6px;-webkit-text-stroke:.28px;color:#101018;">120</span>
<div style="position:absolute;left:0px;top:704px;width:2086.5px;height:1.5px;background:#dfe2ec;"></div>
<div style="position:absolute;left:0.7px;top:583.1px;width:7.3px;height:122.3px;background:#f0994a;"></div>
<div style="position:absolute;left:48.2px;top:615px;width:56.5px;height:57.5px;border:1.5px solid #dfe2ea;border-radius:6px;box-sizing:border-box;background:#fff;"></div>
<svg style="position:absolute;left:48.2px;top:615px;" width="56.5" height="57.5" viewBox="0 0 56.5 57.5" fill="none"><path d="M26.4 17.5H11.2V39H45.3V30.6" stroke="#f09a4a" stroke-width="2.9" fill="none"/><path d="M24.5 40H32.5L35 45H38.8V47.4H18V45H22Z" fill="#f09a4a"/><path d="M36.38 10.23L39.42 10.23L40.3 12.74L40.71 12.91L43.1 11.75L45.25 13.9L44.09 16.29L44.26 16.7L46.77 17.58L46.77 20.62L44.26 21.5L44.09 21.91L45.25 24.3L43.1 26.45L40.71 25.29L40.3 25.46L39.42 27.97L36.38 27.97L35.5 25.46L35.09 25.29L32.7 26.45L30.55 24.3L31.71 21.91L31.54 21.5L29.03 20.62L29.03 17.58L31.54 16.7L31.71 16.29L30.55 13.9L32.7 11.75L35.09 12.91L35.5 12.74Z" stroke="#f09a4a" stroke-width="1.4" fill="none" stroke-linejoin="round"/><circle cx="37.9" cy="19.1" r="2.7" stroke="#f09a4a" stroke-width="1.4" fill="none"/></svg>
<span class="t" style="top:616.7px;font-size:25.5px;left:120.5px;letter-spacing:1.04px;-webkit-text-stroke:.28px;color:#14151f;">bastion-admin</span>
<span class="t" style="top:651.8px;font-size:21px;left:120.5px;letter-spacing:0.52px;-webkit-text-stroke:.28px;color:#6e6f80;">AWS EC2 Instance</span>
<svg style="position:absolute;left:617px;top:625.8px;" width="44" height="34" viewBox="0 0 44 34" fill="none"><text x="22" y="19.5" text-anchor="middle" font-family="Liberation Sans, sans-serif" font-size="22.5" fill="#14151f" textLength="40" lengthAdjust="spacingAndGlyphs">aws</text><path d="M2 25.5C12 32 29 32 40.5 25.5" stroke="#f59a2c" stroke-width="2.2" fill="none" stroke-linecap="round"/><path d="M36.5 23.5L42.5 23L40.5 28.5" stroke="#f59a2c" stroke-width="1.8" fill="none" stroke-linecap="round" stroke-linejoin="round"/></svg>
<span class="t" style="top:617.2px;font-size:25.5px;left:674.6px;letter-spacing:0.98px;-webkit-text-stroke:.28px;color:#14151f;">921442439319</span>
<span class="t" style="top:651.4px;font-size:21px;left:674.6px;letter-spacing:0.7px;-webkit-text-stroke:.28px;color:#6e6f80;">N. Virginia (us-east-1)</span>
<div style="position:absolute;left:1473.2px;top:618.9px;width:51px;height:50px;border:1.5px solid #cfd2e3;border-radius:6px;box-sizing:border-box;background:#fff;"></div>
<span class="t" style="top:627.2px;font-size:25.5px;left:1480.6px;letter-spacing:0.43px;font-weight:700;color:#931c3e;">9.5</span>
<svg style="position:absolute;left:1480px;top:655.3px;" width="38" height="5" viewBox="0 0 37.2 5" fill="none"><circle cx="2.5" cy="2.5" r="2.5" fill="#931c3e"/><circle cx="10.55" cy="2.5" r="2.5" fill="#931c3e"/><circle cx="18.6" cy="2.5" r="2.5" fill="#931c3e"/><circle cx="26.65" cy="2.5" r="2.5" fill="#931c3e"/><circle cx="34.7" cy="2.5" r="2.5" fill="#931c3e"/></svg>
<svg style="position:absolute;left:1735px;top:628.6px;" width="27" height="30.4" viewBox="0 0 27 30.4" fill="none"><path d="M13.5 .600L25.8 7.6Q26.5 8 26.5 8.8V21.6Q26.5 22.4 25.8 22.8L13.5 29.8L1.2 22.8Q.500 22.4 .500 21.6V8.8Q.500 8 1.2 7.6Z" fill="#931c3e"/><path d="M13.5 9.2V17" stroke="#fff" stroke-width="3" stroke-linecap="round"/><circle cx="13.5" cy="21.2" r="1.65" fill="#fff"/></svg>
<span class="t" style="top:631.6px;font-size:24.8px;left:1768.4px;letter-spacing:0.6px;-webkit-text-stroke:.28px;color:#101018;">2</span>
<svg style="position:absolute;left:1800.4px;top:632.6px;" width="22.2" height="22.8" viewBox="0 0 21.4 22" fill="none"><path d="M10.7 .800L20.4 8.2Q20.9 8.6 20.7 9.2L17.3 20.6Q17.1 21.3 16.4 21.3H5Q4.3 21.3 4.1 20.6L.700 9.2Q.500 8.6 1 8.2Z" fill="#d52c5f"/><path d="M10.7 8.3V13.54" stroke="#fff" stroke-width="2.4" stroke-linecap="round"/><circle cx="10.7" cy="16.9" r="1.35" fill="#fff"/></svg>
<span class="t" style="top:631.6px;font-size:24.8px;left:1830.1px;letter-spacing:0.6px;-webkit-text-stroke:.28px;color:#101018;">7</span>
<svg style="position:absolute;left:1862.1px;top:632.7px;" width="22.2" height="22.6" viewBox="0 0 21.6 22" fill="none"><path d="M10.8 1.2Q11.4 .400 12 1.4L21 19.8Q21.5 21.3 20 21.4H1.6Q.100 21.3 .600 19.8L9.6 1.4Q10.2 .400 10.8 1.2Z" fill="#ee8238"/><path d="M10.8 8.6V14.58" stroke="#fff" stroke-width="2.3" stroke-linecap="round"/><circle cx="10.8" cy="17.8" r="1.3" fill="#fff"/></svg>
<span class="t" style="top:631.6px;font-size:24.8px;left:1891.8px;letter-spacing:0.6px;-webkit-text-stroke:.28px;color:#101018;">89</span>
<svg style="position:absolute;left:1940.1px;top:633.2px;" width="21.8" height="21.8" viewBox="0 0 21.4 21.4" fill="none"><circle cx="10.7" cy="10.7" r="10.6" fill="#f2cf5a"/><path d="M10.7 6.4V11.9" stroke="#fff6d8" stroke-width="2.5" stroke-linecap="round"/><circle cx="10.7" cy="15.4" r="1.4" fill="#fff6d8"/></svg>
<span class="t" style="top:631.6px;font-size:24.8px;left:1968.7px;letter-spacing:0.6px;-webkit-text-stroke:.28px;color:#101018;">10</span>
<svg style="position:absolute;left:2017px;top:633.2px;" width="21.8" height="21.8" viewBox="0 0 21.4 21.4" fill="none"><circle cx="10.7" cy="10.7" r="10.6" fill="#9eacc8"/><path d="M10.7 6.4V11.9" stroke="#e8ecf6" stroke-width="2.5" stroke-linecap="round"/><circle cx="10.7" cy="15.4" r="1.4" fill="#e8ecf6"/></svg>
<span class="t" style="top:631.6px;font-size:24.8px;left:2045.6px;letter-spacing:0.6px;-webkit-text-stroke:.28px;color:#101018;">118</span>
<div style="position:absolute;left:0px;top:826.4px;width:2086.5px;height:1.5px;background:#dfe2ec;"></div>
<div style="position:absolute;left:0.7px;top:705.5px;width:7.3px;height:122.3px;background:#f0994a;"></div>
<div style="position:absolute;left:48.2px;top:737.4px;width:56.5px;height:57.5px;border:1.5px solid #dfe2ea;border-radius:6px;box-sizing:border-box;background:#fff;"></div>
<svg style="position:absolute;left:48.2px;top:737.4px;" width="56.5" height="57.5" viewBox="0 0 56.5 57.5" fill="none"><path d="M26.4 17.5H11.2V39H45.3V30.6" stroke="#f09a4a" stroke-width="2.9" fill="none"/><path d="M24.5 40H32.5L35 45H38.8V47.4H18V45H22Z" fill="#f09a4a"/><path d="M36.38 10.23L39.42 10.23L40.3 12.74L40.71 12.91L43.1 11.75L45.25 13.9L44.09 16.29L44.26 16.7L46.77 17.58L46.77 20.62L44.26 21.5L44.09 21.91L45.25 24.3L43.1 26.45L40.71 25.29L40.3 25.46L39.42 27.97L36.38 27.97L35.5 25.46L35.09 25.29L32.7 26.45L30.55 24.3L31.71 21.91L31.54 21.5L29.03 20.62L29.03 17.58L31.54 16.7L31.71 16.29L30.55 13.9L32.7 11.75L35.09 12.91L35.5 12.74Z" stroke="#f09a4a" stroke-width="1.4" fill="none" stroke-linejoin="round"/><circle cx="37.9" cy="19.1" r="2.7" stroke="#f09a4a" stroke-width="1.4" fill="none"/></svg>
<span class="t" style="top:739.1px;font-size:25.5px;left:120.5px;letter-spacing:0.86px;-webkit-text-stroke:.28px;color:#14151f;">compute-log4j-compute</span>
<span class="t" style="top:774.2px;font-size:21px;left:120.5px;letter-spacing:0.6px;-webkit-text-stroke:.28px;color:#6e6f80;">Azure Compute VM Instance</span>
<svg style="position:absolute;left:617px;top:749.7px;" width="42" height="34" viewBox="0 0 42 34" fill="none"><path d="M22.7 .3L10.7 10.2L.1 29.6L9.6 29.4Z" fill="#3b86d3"/><path d="M24.4 2.3L41.9 32.8L10.3 33.5L29.7 29.8L19.7 17.6Z" fill="#3b86d3"/></svg>
<span class="t" style="top:739.6px;font-size:25.5px;left:674.6px;letter-spacing:0.65px;-webkit-text-stroke:.28px;color:#14151f;">orca-seashell-demo</span>
<span class="t" style="top:773.8px;font-size:21px;left:674.6px;letter-spacing:0.59px;-webkit-text-stroke:.28px;color:#6e6f80;">Virginia (eastus)</span>
<div style="position:absolute;left:1473.2px;top:741.3px;width:51px;height:50px;border:1.5px solid #cfd2e3;border-radius:6px;box-sizing:border-box;background:#fff;"></div>
<span class="t" style="top:749.6px;font-size:25.5px;left:1480.6px;letter-spacing:0.43px;font-weight:700;color:#931c3e;">9.2</span>
<svg style="position:absolute;left:1480px;top:777.7px;" width="38" height="5" viewBox="0 0 37.2 5" fill="none"><circle cx="2.5" cy="2.5" r="2.5" fill="#931c3e"/><circle cx="10.55" cy="2.5" r="2.5" fill="#931c3e"/><circle cx="18.6" cy="2.5" r="2.5" fill="#931c3e"/><circle cx="26.65" cy="2.5" r="2.5" fill="#931c3e"/><circle cx="34.7" cy="2.5" r="2.5" fill="#931c3e"/></svg>
<svg style="position:absolute;left:1735px;top:751px;" width="27" height="30.4" viewBox="0 0 27 30.4" fill="none"><path d="M13.5 .600L25.8 7.6Q26.5 8 26.5 8.8V21.6Q26.5 22.4 25.8 22.8L13.5 29.8L1.2 22.8Q.500 22.4 .500 21.6V8.8Q.500 8 1.2 7.6Z" fill="#931c3e"/><path d="M13.5 9.2V17" stroke="#fff" stroke-width="3" stroke-linecap="round"/><circle cx="13.5" cy="21.2" r="1.65" fill="#fff"/></svg>
<span class="t" style="top:754px;font-size:24.8px;left:1768.4px;letter-spacing:0.6px;-webkit-text-stroke:.28px;color:#101018;">1</span>
<svg style="position:absolute;left:1800.4px;top:755px;" width="22.2" height="22.8" viewBox="0 0 21.4 22" fill="none"><path d="M10.7 .800L20.4 8.2Q20.9 8.6 20.7 9.2L17.3 20.6Q17.1 21.3 16.4 21.3H5Q4.3 21.3 4.1 20.6L.700 9.2Q.500 8.6 1 8.2Z" fill="#d52c5f"/><path d="M10.7 8.3V13.54" stroke="#fff" stroke-width="2.4" stroke-linecap="round"/><circle cx="10.7" cy="16.9" r="1.35" fill="#fff"/></svg>
<span class="t" style="top:754px;font-size:24.8px;left:1830.1px;letter-spacing:0.6px;-webkit-text-stroke:.28px;color:#101018;">2</span>
<svg style="position:absolute;left:1862.1px;top:755.1px;" width="22.2" height="22.6" viewBox="0 0 21.6 22" fill="none"><path d="M10.8 1.2Q11.4 .400 12 1.4L21 19.8Q21.5 21.3 20 21.4H1.6Q.100 21.3 .600 19.8L9.6 1.4Q10.2 .400 10.8 1.2Z" fill="#ee8238"/><path d="M10.8 8.6V14.58" stroke="#fff" stroke-width="2.3" stroke-linecap="round"/><circle cx="10.8" cy="17.8" r="1.3" fill="#fff"/></svg>
<span class="t" style="top:754px;font-size:24.8px;left:1891.8px;letter-spacing:0.6px;-webkit-text-stroke:.28px;color:#101018;">40</span>
<svg style="position:absolute;left:1940.1px;top:755.6px;" width="21.8" height="21.8" viewBox="0 0 21.4 21.4" fill="none"><circle cx="10.7" cy="10.7" r="10.6" fill="#f2cf5a"/><path d="M10.7 6.4V11.9" stroke="#fff6d8" stroke-width="2.5" stroke-linecap="round"/><circle cx="10.7" cy="15.4" r="1.4" fill="#fff6d8"/></svg>
<span class="t" style="top:754px;font-size:24.8px;left:1968.7px;letter-spacing:0.6px;-webkit-text-stroke:.28px;color:#101018;">19</span>
<svg style="position:absolute;left:2017px;top:755.6px;" width="21.8" height="21.8" viewBox="0 0 21.4 21.4" fill="none"><circle cx="10.7" cy="10.7" r="10.6" fill="#9eacc8"/><path d="M10.7 6.4V11.9" stroke="#e8ecf6" stroke-width="2.5" stroke-linecap="round"/><circle cx="10.7" cy="15.4" r="1.4" fill="#e8ecf6"/></svg>
<span class="t" style="top:754px;font-size:24.8px;left:2045.6px;letter-spacing:0.6px;-webkit-text-stroke:.28px;color:#101018;">2</span>
<div style="position:absolute;left:0px;top:948.8px;width:2086.5px;height:1.5px;background:#dfe2ec;"></div>
<div style="position:absolute;left:0.7px;top:827.9px;width:7.3px;height:122.3px;background:#f0994a;"></div>
<div style="position:absolute;left:48.2px;top:859.8px;width:56.5px;height:57.5px;border:1.5px solid #dfe2ea;border-radius:6px;box-sizing:border-box;background:#fff;"></div>
<svg style="position:absolute;left:48.2px;top:859.8px;" width="56.5" height="57.5" viewBox="0 0 56.5 57.5" fill="none"><path d="M26.4 17.5H11.2V39H45.3V30.6" stroke="#f09a4a" stroke-width="2.9" fill="none"/><path d="M24.5 40H32.5L35 45H38.8V47.4H18V45H22Z" fill="#f09a4a"/><path d="M36.38 10.23L39.42 10.23L40.3 12.74L40.71 12.91L43.1 11.75L45.25 13.9L44.09 16.29L44.26 16.7L46.77 17.58L46.77 20.62L44.26 21.5L44.09 21.91L45.25 24.3L43.1 26.45L40.71 25.29L40.3 25.46L39.42 27.97L36.38 27.97L35.5 25.46L35.09 25.29L32.7 26.45L30.55 24.3L31.71 21.91L31.54 21.5L29.03 20.62L29.03 17.58L31.54 16.7L31.71 16.29L30.55 13.9L32.7 11.75L35.09 12.91L35.5 12.74Z" stroke="#f09a4a" stroke-width="1.4" fill="none" stroke-linejoin="round"/><circle cx="37.9" cy="19.1" r="2.7" stroke="#f09a4a" stroke-width="1.4" fill="none"/></svg>
<span class="t" style="top:861.5px;font-size:25.5px;left:120.5px;letter-spacing:0.48px;-webkit-text-stroke:.28px;color:#14151f;">ec2_with_log4j</span>
<span class="t" style="top:896.6px;font-size:21px;left:120.5px;letter-spacing:0.52px;-webkit-text-stroke:.28px;color:#6e6f80;">AWS EC2 Instance</span>
<svg style="position:absolute;left:617px;top:870.6px;" width="44" height="34" viewBox="0 0 44 34" fill="none"><text x="22" y="19.5" text-anchor="middle" font-family="Liberation Sans, sans-serif" font-size="22.5" fill="#14151f" textLength="40" lengthAdjust="spacingAndGlyphs">aws</text><path d="M2 25.5C12 32 29 32 40.5 25.5" stroke="#f59a2c" stroke-width="2.2" fill="none" stroke-linecap="round"/><path d="M36.5 23.5L42.5 23L40.5 28.5" stroke="#f59a2c" stroke-width="1.8" fill="none" stroke-linecap="round" stroke-linejoin="round"/></svg>
<span class="t" style="top:862px;font-size:25.5px;left:674.6px;letter-spacing:0.98px;-webkit-text-stroke:.28px;color:#14151f;">921442439319</span>
<span class="t" style="top:896.2px;font-size:21px;left:674.6px;letter-spacing:0.7px;-webkit-text-stroke:.28px;color:#6e6f80;">N. Virginia (us-east-1)</span>
<div style="position:absolute;left:1473.2px;top:863.7px;width:51px;height:50px;border:1.5px solid #cfd2e3;border-radius:6px;box-sizing:border-box;background:#fff;"></div>
<span class="t" style="top:872px;font-size:25.5px;left:1480.6px;letter-spacing:0.43px;font-weight:700;color:#931c3e;">9.1</span>
<svg style="position:absolute;left:1480px;top:900.1px;" width="38" height="5" viewBox="0 0 37.2 5" fill="none"><circle cx="2.5" cy="2.5" r="2.5" fill="#931c3e"/><circle cx="10.55" cy="2.5" r="2.5" fill="#931c3e"/><circle cx="18.6" cy="2.5" r="2.5" fill="#931c3e"/><circle cx="26.65" cy="2.5" r="2.5" fill="#931c3e"/><circle cx="34.7" cy="2.5" r="2.5" fill="#931c3e"/></svg>
<svg style="position:absolute;left:1735px;top:873.4px;" width="27" height="30.4" viewBox="0 0 27 30.4" fill="none"><path d="M13.5 .600L25.8 7.6Q26.5 8 26.5 8.8V21.6Q26.5 22.4 25.8 22.8L13.5 29.8L1.2 22.8Q.500 22.4 .500 21.6V8.8Q.500 8 1.2 7.6Z" fill="#931c3e"/><path d="M13.5 9.2V17" stroke="#fff" stroke-width="3" stroke-linecap="round"/><circle cx="13.5" cy="21.2" r="1.65" fill="#fff"/></svg>
<span class="t" style="top:876.4px;font-size:24.8px;left:1768.4px;letter-spacing:0.6px;-webkit-text-stroke:.28px;color:#101018;">1</span>
<svg style="position:absolute;left:1800.4px;top:877.4px;" width="22.2" height="22.8" viewBox="0 0 21.4 22" fill="none"><path d="M10.7 .800L20.4 8.2Q20.9 8.6 20.7 9.2L17.3 20.6Q17.1 21.3 16.4 21.3H5Q4.3 21.3 4.1 20.6L.700 9.2Q.500 8.6 1 8.2Z" fill="#d52c5f"/><path d="M10.7 8.3V13.54" stroke="#fff" stroke-width="2.4" stroke-linecap="round"/><circle cx="10.7" cy="16.9" r="1.35" fill="#fff"/></svg>
<span class="t" style="top:876.4px;font-size:24.8px;left:1830.1px;letter-spacing:0.6px;-webkit-text-stroke:.28px;color:#101018;">6</span>
<svg style="position:absolute;left:1862.1px;top:877.5px;" width="22.2" height="22.6" viewBox="0 0 21.6 22" fill="none"><path d="M10.8 1.2Q11.4 .400 12 1.4L21 19.8Q21.5 21.3 20 21.4H1.6Q.100 21.3 .600 19.8L9.6 1.4Q10.2 .400 10.8 1.2Z" fill="#ee8238"/><path d="M10.8 8.6V14.58" stroke="#fff" stroke-width="2.3" stroke-linecap="round"/><circle cx="10.8" cy="17.8" r="1.3" fill="#fff"/></svg>
<span class="t" style="top:876.4px;font-size:24.8px;left:1891.8px;letter-spacing:0.6px;-webkit-text-stroke:.28px;color:#101018;">44</span>
<svg style="position:absolute;left:1940.1px;top:878px;" width="21.8" height="21.8" viewBox="0 0 21.4 21.4" fill="none"><circle cx="10.7" cy="10.7" r="10.6" fill="#f2cf5a"/><path d="M10.7 6.4V11.9" stroke="#fff6d8" stroke-width="2.5" stroke-linecap="round"/><circle cx="10.7" cy="15.4" r="1.4" fill="#fff6d8"/></svg>
<span class="t" style="top:876.4px;font-size:24.8px;left:1968.7px;letter-spacing:0.6px;-webkit-text-stroke:.28px;color:#101018;">19</span>
<div style="position:absolute;left:0px;top:1071.2px;width:2086.5px;height:1.5px;background:#dfe2ec;"></div>
<div style="position:absolute;left:0.7px;top:950.3px;width:7.3px;height:122.3px;background:#f0994a;"></div>
<div style="position:absolute;left:48.2px;top:982.2px;width:56.5px;height:57.5px;border:1.5px solid #dfe2ea;border-radius:6px;box-sizing:border-box;background:#fff;"></div>
<svg style="position:absolute;left:48.2px;top:982.2px;" width="56.5" height="57.5" viewBox="0 0 56.5 57.5" fill="none"><path d="M26.4 17.5H11.2V39H45.3V30.6" stroke="#f09a4a" stroke-width="2.9" fill="none"/><path d="M24.5 40H32.5L35 45H38.8V47.4H18V45H22Z" fill="#f09a4a"/><path d="M36.38 10.23L39.42 10.23L40.3 12.74L40.71 12.91L43.1 11.75L45.25 13.9L44.09 16.29L44.26 16.7L46.77 17.58L46.77 20.62L44.26 21.5L44.09 21.91L45.25 24.3L43.1 26.45L40.71 25.29L40.3 25.46L39.42 27.97L36.38 27.97L35.5 25.46L35.09 25.29L32.7 26.45L30.55 24.3L31.71 21.91L31.54 21.5L29.03 20.62L29.03 17.58L31.54 16.7L31.71 16.29L30.55 13.9L32.7 11.75L35.09 12.91L35.5 12.74Z" stroke="#f09a4a" stroke-width="1.4" fill="none" stroke-linejoin="round"/><circle cx="37.9" cy="19.1" r="2.7" stroke="#f09a4a" stroke-width="1.4" fill="none"/></svg>
<span class="t" style="top:983.9px;font-size:25.5px;left:120.5px;letter-spacing:0.78px;-webkit-text-stroke:.28px;color:#14151f;">vm-instance</span>
<span class="t" style="top:1019px;font-size:21px;left:120.5px;letter-spacing:0.45px;-webkit-text-stroke:.28px;color:#6e6f80;">GCP Compute VM Instance</span>
<svg style="position:absolute;left:615.6px;top:992.9px;" width="45.7" height="37.4" viewBox="0 0 44 36" fill="none"><path d="M28 10.2l3.6-3.6.2-1.5C25.3-.8 14.9 0 9.5 6.5 8 8.3 6.9 10.5 6.3 12.8l1.3-.2 7.2-1.2.6-.6c3.2-3.5 8.6-4 12.3-1z" fill="#ea4335"/>
<path d="M37.7 12.8c-.8-3-2.5-5.8-4.9-7.9l-5 5c2.1 1.7 3.3 4.3 3.3 7v.9c2.5 0 4.5 2 4.5 4.5s-2 4.5-4.5 4.5h-9l-.9.9v5.4l.9.9h9c6.5 0 11.8-5.1 11.8-11.6 0-3.9-1.9-7.6-5.2-9.8z" fill="#4285f4"/>
<path d="M13 34.1h9v-7.2h-9c-.6 0-1.3-.1-1.9-.4l-1.3.4-3.6 3.6-.3 1.2c2 1.5 4.5 2.4 7.1 2.4z" fill="#34a853"/>
<path d="M13 10.7C6.5 10.8 1.3 16.1 1.3 22.6c0 3.6 1.7 7 4.6 9.2l5.2-5.2c-2.3-1-3.3-3.7-2.3-5.9 1-2.3 3.7-3.3 5.9-2.3 1 .5 1.8 1.3 2.3 2.3l5.2-5.2C20 12.5 16.6 10.7 13 10.7z" fill="#fbbc05"/></svg>
<span class="t" style="top:984.4px;font-size:25.5px;left:674.6px;letter-spacing:0.65px;-webkit-text-stroke:.28px;color:#14151f;">orca-seashell-demo</span>
<span class="t" style="top:1018.6px;font-size:21px;left:674.6px;letter-spacing:0.57px;-webkit-text-stroke:.28px;color:#6e6f80;">Council Bluffs (us-central1)</span>
<div style="position:absolute;left:1473.2px;top:986.1px;width:51px;height:50px;border:1.5px solid #cfd2e3;border-radius:6px;box-sizing:border-box;background:#fff;"></div>
<span class="t" style="top:994.4px;font-size:25.5px;left:1480.6px;letter-spacing:0.43px;font-weight:700;color:#931c3e;">9.1</span>
<svg style="position:absolute;left:1480px;top:1022.5px;" width="38" height="5" viewBox="0 0 37.2 5" fill="none"><circle cx="2.5" cy="2.5" r="2.5" fill="#931c3e"/><circle cx="10.55" cy="2.5" r="2.5" fill="#931c3e"/><circle cx="18.6" cy="2.5" r="2.5" fill="#931c3e"/><circle cx="26.65" cy="2.5" r="2.5" fill="#931c3e"/><circle cx="34.7" cy="2.5" r="2.5" fill="#931c3e"/></svg>
<svg style="position:absolute;left:1735px;top:995.8px;" width="27" height="30.4" viewBox="0 0 27 30.4" fill="none"><path d="M13.5 .600L25.8 7.6Q26.5 8 26.5 8.8V21.6Q26.5 22.4 25.8 22.8L13.5 29.8L1.2 22.8Q.500 22.4 .500 21.6V8.8Q.500 8 1.2 7.6Z" fill="#931c3e"/><path d="M13.5 9.2V17" stroke="#fff" stroke-width="3" stroke-linecap="round"/><circle cx="13.5" cy="21.2" r="1.65" fill="#fff"/></svg>
<span class="t" style="top:998.8px;font-size:24.8px;left:1768.4px;letter-spacing:0.6px;-webkit-text-stroke:.28px;color:#101018;">1</span>
<svg style="position:absolute;left:1800.4px;top:999.8px;" width="22.2" height="22.8" viewBox="0 0 21.4 22" fill="none"><path d="M10.7 .800L20.4 8.2Q20.9 8.6 20.7 9.2L17.3 20.6Q17.1 21.3 16.4 21.3H5Q4.3 21.3 4.1 20.6L.700 9.2Q.500 8.6 1 8.2Z" fill="#d52c5f"/><path d="M10.7 8.3V13.54" stroke="#fff" stroke-width="2.4" stroke-linecap="round"/><circle cx="10.7" cy="16.9" r="1.35" fill="#fff"/></svg>
<span class="t" style="top:998.8px;font-size:24.8px;left:1830.1px;letter-spacing:0.6px;-webkit-text-stroke:.28px;color:#101018;">4</span>
<svg style="position:absolute;left:1862.1px;top:999.9px;" width="22.2" height="22.6" viewBox="0 0 21.6 22" fill="none"><path d="M10.8 1.2Q11.4 .400 12 1.4L21 19.8Q21.5 21.3 20 21.4H1.6Q.100 21.3 .600 19.8L9.6 1.4Q10.2 .400 10.8 1.2Z" fill="#ee8238"/><path d="M10.8 8.6V14.58" stroke="#fff" stroke-width="2.3" stroke-linecap="round"/><circle cx="10.8" cy="17.8" r="1.3" fill="#fff"/></svg>
<span class="t" style="top:998.8px;font-size:24.8px;left:1891.8px;letter-spacing:0.6px;-webkit-text-stroke:.28px;color:#101018;">37</span>
<svg style="position:absolute;left:1940.1px;top:1000.4px;" width="21.8" height="21.8" viewBox="0 0 21.4 21.4" fill="none"><circle cx="10.7" cy="10.7" r="10.6" fill="#f2cf5a"/><path d="M10.7 6.4V11.9" stroke="#fff6d8" stroke-width="2.5" stroke-linecap="round"/><circle cx="10.7" cy="15.4" r="1.4" fill="#fff6d8"/></svg>
<span class="t" style="top:998.8px;font-size:24.8px;left:1968.7px;letter-spacing:0.6px;-webkit-text-stroke:.28px;color:#101018;">20</span>
<svg style="position:absolute;left:2017px;top:1000.4px;" width="21.8" height="21.8" viewBox="0 0 21.4 21.4" fill="none"><circle cx="10.7" cy="10.7" r="10.6" fill="#9eacc8"/><path d="M10.7 6.4V11.9" stroke="#e8ecf6" stroke-width="2.5" stroke-linecap="round"/><circle cx="10.7" cy="15.4" r="1.4" fill="#e8ecf6"/></svg>
<span class="t" style="top:998.8px;font-size:24.8px;left:2045.6px;letter-spacing:0.6px;-webkit-text-stroke:.28px;color:#101018;">3</span>
<div style="position:absolute;left:588px;top:0px;width:30px;height:1100px;background:linear-gradient(90deg,rgba(90,95,130,.10),rgba(90,95,130,.03) 50%,rgba(90,95,130,0));"></div>
<div style="position:absolute;left:0px;top:1048.3px;width:395px;height:20px;background:#c9cdda;border-top-right-radius:5px;"></div>
</div>
<div style="position:absolute;left:108px;top:108px;width:2744px;height:128.5px;background:#fcfcfe;"></div>
<div style="position:absolute;left:108px;top:235.8px;width:2744px;height:1.2px;background:#cdd1e0;"></div>
<h1 class="t" style="top:150.3px;font-size:44px;left:181.5px;letter-spacing:1.38px;color:#14151f;">Inventory</h1>
<div style="position:absolute;left:425px;top:143px;width:405px;height:58px;border:1.5px solid #d3d6e2;border-radius:4px;box-sizing:border-box;background:#fff;"></div>
<svg style="position:absolute;left:444px;top:162px;" width="24" height="20" viewBox="0 0 24 20" fill="none"><path d="M1.5 10C4 5.5 7.5 3 12 3s8 2.5 10.5 7c-2.5 4.5-6 7-10.5 7S4 14.5 1.5 10Z" stroke="#14151f" stroke-width="1.8"/><circle cx="12" cy="10" r="3.6" stroke="#14151f" stroke-width="1.8"/></svg>
<span class="t" style="top:160.7px;font-size:25.5px;left:474px;letter-spacing:0.37px;-webkit-text-stroke:.28px;color:#14151f;">Current View</span>
<span class="t" style="top:160.7px;font-size:25.5px;left:634px;letter-spacing:0.03px;font-weight:700;color:#14151f;">Orca Default</span>
<svg style="position:absolute;left:801px;top:167px;" width="14" height="10.5" viewBox="0 0 14 10.5" fill="none"><path d="M0 0H14L7 10.5Z" fill="#5e5f6e"/></svg>
<svg style="position:absolute;left:858px;top:160px;" width="24" height="24" viewBox="0 0 24 24" fill="none"><rect x="2" y="2" width="19" height="20" rx="2" stroke="#c9cbd6" stroke-width="2"/><path d="M6.5 2v6h10V2" stroke="#c9cbd6" stroke-width="2"/><path d="M7.5 15.5h8" stroke="#c9cbd6" stroke-width="2" stroke-linecap="round"/></svg>
<span class="t" style="top:159.8px;font-size:26px;left:892px;letter-spacing:0.95px;-webkit-text-stroke:.28px;color:#c3c5d1;">Save View</span>
<div style="position:absolute;left:2591px;top:146px;width:53px;height:52px;border:1.5px solid #3b82f6;border-radius:4px;box-sizing:border-box;background:#fff;"></div>
<svg style="position:absolute;left:2604px;top:158px;" width="28" height="28" viewBox="0 0 28 28" fill="none"><path d="M4 4.5H24L16.5 14.5V23.5L11.5 21V14.5Z" stroke="#14151f" stroke-width="2.2" stroke-linejoin="round"/></svg>
<div style="position:absolute;left:2665px;top:143px;width:172px;height:58px;border:1.5px solid #d3d6e2;border-radius:4px;box-sizing:border-box;background:#fff;"></div>
<svg style="position:absolute;left:2683px;top:160px;" width="24" height="24" viewBox="0 0 24 24" fill="none"><path d="M9 4H5.5A2.5 2.5 0 0 0 3 6.5v12A2.5 2.5 0 0 0 5.5 21h12a2.5 2.5 0 0 0 2.5-2.5V15" stroke="#14151f" stroke-width="2.1" stroke-linecap="round"/><path d="M10.5 15.5c0-5.5 3-8.5 9.5-8.5" stroke="#14151f" stroke-width="2.1" stroke-linecap="round"/><path d="M16 2.5L20.5 7L16 11.5" stroke="#14151f" stroke-width="2.1" stroke-linecap="round" stroke-linejoin="round"/></svg>
<span class="t" style="top:159.5px;font-size:26px;left:2718px;letter-spacing:0.07px;-webkit-text-stroke:.28px;color:#14151f;">Export</span>
<svg style="position:absolute;left:2807px;top:167px;" width="14" height="10.5" viewBox="0 0 14 10.5" fill="none"><path d="M0 0H14L7 10.5Z" fill="#5e5f6e"/></svg>
<div style="position:absolute;left:108px;top:237.5px;width:568px;height:1556.5px;background:#fff;"></div>
<div style="position:absolute;left:676.3px;top:237px;width:2px;height:1557px;background:#c9cddd;"></div>
<h2 class="t" style="top:286.6px;font-size:24.5px;left:137px;letter-spacing:0.12px;font-weight:700;color:#6f7083;">Asset Categories</h2>
<div style="position:absolute;left:651.5px;top:266px;width:49px;height:49.5px;background:#fff;border-radius:8px;box-shadow:0 2px 6px rgba(60,70,110,.22);"></div>
<svg style="position:absolute;left:667px;top:277px;" width="20" height="27" viewBox="0 0 20 27" fill="none"><path d="M16.5 2.5L4 13.5L16.5 24.5" stroke="#3b82f6" stroke-width="3" stroke-linecap="round" stroke-linejoin="round"/></svg>
<div style="position:absolute;left:137px;top:362px;width:50px;height:50px;border:1.5px solid #d6d9e5;border-radius:4px;box-sizing:border-box;background:#fff;"></div>
<svg style="position:absolute;left:149px;top:376px;" width="26" height="22" viewBox="0 0 26 22" fill="none"><g stroke="#14151f" stroke-width="1.8" fill="none"><circle cx="4.5" cy="11" r="2.7"/><circle cx="20" cy="5.5" r="3.7"/><circle cx="20.5" cy="16.5" r="3.7"/><path d="M7.2 11H10.5M16.5 5.5H14a3.5 3.5 0 0 0-3.5 3.5v4a3.5 3.5 0 0 0 3.5 3.5h2.8"/></g></svg>
<span class="t" style="top:374.5px;font-size:28px;left:203px;letter-spacing:0.83px;-webkit-text-stroke:.28px;color:#14151f;">All Asset Types</span>
<svg style="position:absolute;left:609px;top:371px;" width="32" height="32" viewBox="0 0 32 32" fill="none"><circle cx="14" cy="14" r="10" stroke="#14151f" stroke-width="2.8"/><path d="M21.5 21.5L28.5 28.5" stroke="#14151f" stroke-width="3" stroke-linecap="round"/></svg>
<div style="position:absolute;left:108px;top:440.1px;width:567px;height:1.2px;background:#dfe2ec;"></div>
<div style="position:absolute;left:137px;top:478.7px;width:21px;height:22.3px;border:1.5px solid #8c8d9a;border-radius:4.5px;box-sizing:border-box;background:#fff;"></div>
<svg style="position:absolute;left:173px;top:465px;" width="50" height="50" viewBox="0 0 50 50" fill="none"><rect width="50" height="50" rx="3.5" fill="#f09a4a"/><g stroke="#fff" stroke-width="1.8" fill="none" stroke-linecap="round" stroke-linejoin="round"><rect x="14.5" y="17" width="21" height="12.5" rx="1"/><path d="M25 29.5V34M20.5 34.5h9"/></g></svg>
<span class="t" style="top:475.9px;font-size:29px;left:238px;-webkit-text-stroke:.28px;color:#14151f;">Compute Services</span>
<span class="t" style="top:478.5px;font-size:25px;right:2206.5px;font-weight:700;color:#14151f;transform:scaleX(.955);transform-origin:100% 0;">366</span>
<div style="position:absolute;left:108px;top:545.4px;width:567px;height:1.2px;background:#dfe2ec;"></div>
<div style="position:absolute;left:137px;top:584px;width:21px;height:22.3px;border:1.5px solid #8c8d9a;border-radius:4.5px;box-sizing:border-box;background:#fff;"></div>
<svg style="position:absolute;left:173px;top:570.3px;" width="50" height="50" viewBox="0 0 50 50" fill="none"><rect width="50" height="50" rx="3.5" fill="#5bba6c"/><g stroke="#fff" stroke-width="1.8" fill="none" stroke-linecap="round" stroke-linejoin="round"><rect x="17.5" y="16.5" width="15" height="17" rx="1"/><path d="M17.5 22h15M17.5 28h15"/></g></svg>
<span class="t" style="top:581.2px;font-size:29px;left:238px;letter-spacing:0.65px;-webkit-text-stroke:.28px;color:#14151f;">Data Storage</span>
<span class="t" style="top:583.9px;font-size:25px;right:2206.5px;font-weight:700;color:#14151f;transform:scaleX(.955);transform-origin:100% 0;">74</span>
<div style="position:absolute;left:108px;top:650.8px;width:567px;height:1.2px;background:#dfe2ec;"></div>
<div style="position:absolute;left:137px;top:689.4px;width:21px;height:22.3px;border:1.5px solid #8c8d9a;border-radius:4.5px;box-sizing:border-box;background:#fff;"></div>
<svg style="position:absolute;left:173px;top:675.7px;" width="50" height="50" viewBox="0 0 50 50" fill="none"><rect width="50" height="50" rx="3.5" fill="#e66f68"/><g stroke="#fff" stroke-width="1.8" fill="none" stroke-linecap="round" stroke-linejoin="round"><path d="M17.5 18v5M21.5 18v5M32.5 18v5M25 27v5M29 27v5M32.5 27v5"/><ellipse cx="27" cy="20.5" rx="1.8" ry="2.5"/><ellipse cx="19.5" cy="29.5" rx="1.8" ry="2.5"/></g></svg>
<span class="t" style="top:686.6px;font-size:29px;left:238px;letter-spacing:0.29px;-webkit-text-stroke:.28px;color:#14151f;">Encryption and Secrets</span>
<span class="t" style="top:689.2px;font-size:25px;right:2206.5px;font-weight:700;color:#14151f;transform:scaleX(.955);transform-origin:100% 0;">35</span>
<div style="position:absolute;left:108px;top:756.1px;width:567px;height:1.2px;background:#dfe2ec;"></div>
<div style="position:absolute;left:137px;top:794.8px;width:21px;height:22.3px;border:1.5px solid #8c8d9a;border-radius:4.5px;box-sizing:border-box;background:#fff;"></div>
<svg style="position:absolute;left:173px;top:781px;" width="50" height="50" viewBox="0 0 50 50" fill="none"><rect width="50" height="50" rx="3.5" fill="#b072e8"/><g stroke="#fff" stroke-width="1.8" fill="none" stroke-linecap="round" stroke-linejoin="round" stroke-width="2"><path d="M33 19H20.5a3 3 0 0 0 0 6H29.5a3 3 0 0 1 0 6H17"/><circle cx="25" cy="25" r="2.2" fill="#fff"/><circle cx="33.5" cy="19" r="1.8"/><circle cx="16.5" cy="31" r="1.8"/></g></svg>
<span class="t" style="top:791.9px;font-size:29px;left:238px;letter-spacing:1.11px;-webkit-text-stroke:.28px;color:#14151f;">Network</span>
<span class="t" style="top:794.6px;font-size:25px;right:2206.5px;font-weight:700;color:#14151f;transform:scaleX(.955);transform-origin:100% 0;">696</span>
<div style="position:absolute;left:108px;top:861.5px;width:567px;height:1.2px;background:#dfe2ec;"></div>
<div style="position:absolute;left:137px;top:900.1px;width:21px;height:22.3px;border:1.5px solid #8c8d9a;border-radius:4.5px;box-sizing:border-box;background:#fff;"></div>
<svg style="position:absolute;left:173px;top:886.4px;" width="50" height="50" viewBox="0 0 50 50" fill="none"><rect width="50" height="50" rx="3.5" fill="#3d4959"/><g stroke="#fff" stroke-width="1.8" fill="none" stroke-linecap="round" stroke-linejoin="round"><circle cx="25" cy="25" r="2"/><circle cx="25" cy="17" r="1.8"/><circle cx="25" cy="33" r="1.8"/><circle cx="16" cy="25" r="1.8"/><circle cx="34" cy="25" r="1.8"/><path d="M25 19v4M25 27v4M18 25h5M27 25h5"/></g></svg>
<span class="t" style="top:897.3px;font-size:29px;left:238px;letter-spacing:0.51px;-webkit-text-stroke:.28px;color:#14151f;">Identity and Access</span>
<span class="t" style="top:899.9px;font-size:25px;right:2206.5px;font-weight:700;color:#14151f;transform:scaleX(.955);transform-origin:100% 0;">5,131</span>
<div style="position:absolute;left:108px;top:966.9px;width:567px;height:1.2px;background:#dfe2ec;"></div>
<div style="position:absolute;left:137px;top:1005.5px;width:21px;height:22.3px;border:1.5px solid #8c8d9a;border-radius:4.5px;box-sizing:border-box;background:#fff;"></div>
<svg style="position:absolute;left:173px;top:991.8px;" width="50" height="50" viewBox="0 0 50 50" fill="none"><rect width="50" height="50" rx="3.5" fill="#5b86f0"/><g stroke="#fff" stroke-width="1.8" fill="none" stroke-linecap="round" stroke-linejoin="round" stroke-width="1.6"><circle cx="25" cy="25" r="6.5"/><path d="M25 25L25 16.5M25 25L31.6 19.7M25 25L33.3 26.8M25 25L28.9 32.6M25 25L21.5 32.8M25 25L16.8 27.2M25 25L18.1 20M25 25L24.6 16.5"/><circle cx="25" cy="25" r="1.5" fill="#fff"/></g></svg>
<span class="t" style="top:1002.6px;font-size:29px;left:238px;letter-spacing:0.19px;-webkit-text-stroke:.28px;color:#14151f;">Kubernetes</span>
<span class="t" style="top:1005.3px;font-size:25px;right:2206.5px;font-weight:700;color:#14151f;transform:scaleX(.955);transform-origin:100% 0;">587</span>
<div style="position:absolute;left:108px;top:1072.2px;width:567px;height:1.2px;background:#dfe2ec;"></div>
<div style="position:absolute;left:137px;top:1110.8px;width:21px;height:22.3px;border:1.5px solid #8c8d9a;border-radius:4.5px;box-sizing:border-box;background:#fff;"></div>
<svg style="position:absolute;left:173px;top:1097.1px;" width="50" height="50" viewBox="0 0 50 50" fill="none"><rect width="50" height="50" rx="3.5" fill="#e8749d"/><g stroke="#fff" stroke-width="1.8" fill="none" stroke-linecap="round" stroke-linejoin="round"><path d="M31 16.5H16.5a1 1 0 0 0-1 1V32.5a1 1 0 0 0 1 1H33.5a1 1 0 0 0 1-1V21"/><path d="M15.5 27h3l2-4l3 6l2.5-7l2.5 6l2-3h4"/><circle cx="33.5" cy="17.5" r="1.6"/></g></svg>
<span class="t" style="top:1108px;font-size:29px;left:238px;letter-spacing:0.52px;-webkit-text-stroke:.28px;color:#14151f;">Security and Monitoring</span>
<span class="t" style="top:1110.6px;font-size:25px;right:2206.5px;font-weight:700;color:#14151f;transform:scaleX(.955);transform-origin:100% 0;">328</span>
<div style="position:absolute;left:108px;top:1177.5px;width:567px;height:1.2px;background:#dfe2ec;"></div>
<div style="position:absolute;left:137px;top:1216.1px;width:21px;height:22.3px;border:1.5px solid #8c8d9a;border-radius:4.5px;box-sizing:border-box;background:#fff;"></div>
<svg style="position:absolute;left:173px;top:1202.4px;" width="50" height="50" viewBox="0 0 50 50" fill="none"><rect width="50" height="50" rx="3.5" fill="#469c8a"/><g stroke="#fff" stroke-width="1.8" fill="none" stroke-linecap="round" stroke-linejoin="round"><circle cx="25" cy="25" r="2.3"/><path d="M18 29.5a8.5 8.5 0 0 1 3-12"/><path d="M32 20.5a8.5 8.5 0 0 1-3 12"/><path d="M17 17.5h4v4" /><path d="M33 32.5h-4v-4"/><path d="M28 17l3.5-1l1 3.5"/><path d="M22 33l-3.5 1l-1-3.5"/></g></svg>
<span class="t" style="top:1213.3px;font-size:29px;left:238px;letter-spacing:-0.49px;-webkit-text-stroke:.28px;color:#14151f;">CI Source</span>
<span class="t" style="top:1216px;font-size:25px;right:2206.5px;font-weight:700;color:#14151f;transform:scaleX(.955);transform-origin:100% 0;">4</span>
<div style="position:absolute;left:108px;top:1282.9px;width:567px;height:1.2px;background:#dfe2ec;"></div>
<div style="position:absolute;left:137px;top:1321.5px;width:21px;height:22.3px;border:1.5px solid #8c8d9a;border-radius:4.5px;box-sizing:border-box;background:#fff;"></div>
<svg style="position:absolute;left:173px;top:1307.8px;" width="50" height="50" viewBox="0 0 50 50" fill="none"><rect width="50" height="50" rx="3.5" fill="#91a3c0"/><g stroke="#fff" stroke-width="1.8" fill="none" stroke-linecap="round" stroke-linejoin="round"><path d="M18.5 34V16.5h13V34M15.5 34h19"/><path d="M22.5 20.5h0.01M27.5 20.5h0.01M22.5 24.5h0.01M27.5 24.5h0.01M22.5 28.5h0.01M27.5 28.5h0.01" stroke-width="2.6"/><path d="M23.5 34v-3h3v3"/></g></svg>
<span class="t" style="top:1318.7px;font-size:29px;left:238px;letter-spacing:0.69px;-webkit-text-stroke:.28px;color:#14151f;">Organization</span>
<span class="t" style="top:1321.3px;font-size:25px;right:2206.5px;font-weight:700;color:#14151f;transform:scaleX(.955);transform-origin:100% 0;">7</span>
<div style="position:absolute;left:108px;top:1388.2px;width:567px;height:1.2px;background:#dfe2ec;"></div>
<div style="position:absolute;left:0px;top:108px;width:108px;height:1686px;background:#fff;"></div>
<div style="position:absolute;left:108px;top:108px;width:30px;height:1686px;background:linear-gradient(90deg,rgba(60,60,75,.085),rgba(60,60,75,.025) 45%,rgba(60,60,75,0));"></div>
<svg style="position:absolute;left:42px;top:145px;" width="34" height="32" viewBox="0 0 34 32" fill="none"><rect x="3" y="13" width="20.5" height="15.5" rx="2.5" stroke="#777886" stroke-width="2"/><path d="M18.5 13V7.5a6 6 0 0 1 12 0V9" stroke="#777886" stroke-width="2" stroke-linecap="round"/><circle cx="13.2" cy="19.5" r="2.3" fill="#777886"/><path d="M13.2 20v3.5" stroke="#777886" stroke-width="2" stroke-linecap="round"/></svg>
<svg style="position:absolute;left:36px;top:270px;" width="36" height="36" viewBox="0 0 36 36" fill="none"><g stroke="#1c1d2b" stroke-width="2.2"><rect x="2.2" y="2.2" width="12.6" height="17.6" rx="2"/><rect x="20.7" y="2.2" width="12.6" height="6.6" rx="2"/><rect x="20.7" y="14.7" width="12.6" height="18.6" rx="2"/><rect x="2.2" y="25.7" width="12.6" height="7.6" rx="2"/></g></svg>
<svg style="position:absolute;left:35px;top:377px;" width="36" height="34" viewBox="0 0 36 34" fill="none"><path d="M18 3.5L33 30.5H3Z" stroke="#1c1d2b" stroke-width="2.2" stroke-linejoin="round"/><path d="M18 13V21.5" stroke="#1c1d2b" stroke-width="2.8" stroke-linecap="round"/><circle cx="18" cy="26" r="1.7" fill="#1c1d2b"/></svg>
<svg style="position:absolute;left:38px;top:484px;" width="32" height="32" viewBox="0 0 32 32" fill="none"><circle cx="13.5" cy="13.5" r="10.5" stroke="#1c1d2b" stroke-width="2.2"/><path d="M21.5 21.5L29 29" stroke="#1c1d2b" stroke-width="2.2" stroke-linecap="round"/></svg>
<svg style="position:absolute;left:32px;top:588px;" width="42" height="38" viewBox="0 0 42 38" fill="none"><rect x="2.5" y="3" width="36.5" height="31" rx="2.5" stroke="#1c1d2b" stroke-width="2.2"/><path d="M8 12.5h9M8 18.5h9M8 24.5h9" stroke="#1c1d2b" stroke-width="2.1" stroke-linecap="round"/><path d="M26.5 12.5a6.5 6.5 0 1 0 6.5 6.5h-6.5Z" stroke="#1c1d2b" stroke-width="2.1" stroke-linejoin="round"/></svg>
<div style="position:absolute;left:14px;top:673px;width:80px;height:79px;background:#e7effd;border-radius:13px;"></div>
<svg style="position:absolute;left:34px;top:694px;" width="42" height="38" viewBox="0 0 42 38" fill="none"><g stroke="#3478eb" stroke-width="2.6" fill="none"><path d="M7 19H17M29 10H22.5a5.5 5.5 0 0 0-5.5 5.5v7a5.5 5.5 0 0 0 5.5 5.5h6.5"/></g><circle cx="6.5" cy="19" r="4.6" fill="#3478eb"/><circle cx="30" cy="10" r="5.6" fill="#3478eb"/><circle cx="30" cy="28" r="5.6" fill="#3478eb"/></svg>
<svg style="position:absolute;left:40px;top:800px;" width="30" height="38" viewBox="0 0 30 38" fill="none"><rect x="2.5" y="9.5" width="24.5" height="24.5" rx="2.5" stroke="#1c1d2b" stroke-width="2.1"/><path d="M10 3.5h9.5" stroke="#1c1d2b" stroke-width="2.1" stroke-linecap="round"/><path d="M9.5 22l4 4l7-8" stroke="#1c1d2b" stroke-width="2.1" stroke-linecap="round" stroke-linejoin="round"/></svg>
<svg style="position:absolute;left:37px;top:913px;" width="36" height="26" viewBox="0 0 36 26" fill="none"><path d="M8.5 8.3a6 6 0 1 0 1 11.7c3.5 0 5.5-2 8.5-6s5-6 8.5-6a6 6 0 0 1 0 12c-3.5 0-5.5-2-8.5-6c-2-2.7-3.6-4.5-5.5-5.4" stroke="#1c1d2b" stroke-width="2.1" stroke-linejoin="round" stroke-linecap="round"/><path d="M6.5 2.5L8.3 8.5L14 6.8" stroke="#1c1d2b" stroke-width="2.1" stroke-linecap="round" stroke-linejoin="round"/></svg>
<div style="position:absolute;left:17.5px;top:1009.5px;width:73px;height:1.5px;background:#e2e4ec;"></div>
<svg style="position:absolute;left:38px;top:1060px;" width="34" height="36" viewBox="0 0 34 36" fill="none"><circle cx="7" cy="27.5" r="4.5" stroke="#1c1d2b" stroke-width="2.1"/><path d="M11.5 27.5h3a4 4 0 0 0 4-4V12a4 4 0 0 1 4-4h7" stroke="#1c1d2b" stroke-width="2.1" stroke-linecap="round"/><path d="M25 3l5 5l-5 5" stroke="#1c1d2b" stroke-width="2.1" stroke-linecap="round" stroke-linejoin="round"/></svg>
<svg style="position:absolute;left:35.6px;top:1166.5px;" width="36" height="36" viewBox="0 0 36 36" fill="none"><path d="M14.7 1.8L21.3 1.8L23.1 6.6L22.5 6.3L27.1 4.2L31.8 8.9L29.7 13.5L29.4 12.9L34.2 14.7L34.2 21.3L29.4 23.1L29.7 22.5L31.8 27.1L27.1 31.8L22.5 29.7L23.1 29.4L21.3 34.2L14.7 34.2L12.9 29.4L13.5 29.7L8.9 31.8L4.2 27.1L6.3 22.5L6.6 23.1L1.8 21.3L1.8 14.7L6.6 12.9L6.3 13.5L4.2 8.9L8.9 4.2L13.5 6.3L12.9 6.6Z" stroke="#1c1d2b" stroke-width="2.1" stroke-linejoin="round"/><circle cx="18" cy="18" r="5.5" stroke="#1c1d2b" stroke-width="2.1"/></svg>
<div style="position:absolute;left:21.5px;top:1699px;width:65px;height:65px;background:#f1f2f8;border-radius:9px;"></div>
<svg style="position:absolute;left:37px;top:1714px;" width="36" height="36" viewBox="0 0 36 36" fill="none"><g stroke="#4a4b5c" stroke-width="2" fill="none" stroke-linecap="round"><circle cx="13" cy="9.5" r="6"/><path d="M3 30c0-8 4-12 10-12c2 0 3.5.4 5 1.2"/><circle cx="27" cy="21.5" r="5.5"/><path d="M23 25.5L16 32.5M18.5 30l2 2"/></g><circle cx="28" cy="20.5" r="1.3" fill="#4a4b5c"/></svg>
<div style="position:absolute;left:0px;top:0px;width:2852px;height:108px;background:#1a1c3b;"></div>
<svg role="img" aria-label="orca" style="position:absolute;left:0px;top:0px;" width="220" height="108" viewBox="0 0 220 108" fill="none"><defs><clipPath id="lgr"><path d="M54.4 33.6a20 20 0 1 0 0 40a20 20 0 1 0 0-40Zm0 11.7a8.3 8.3 0 1 1 0 16.6a8.3 8.3 0 1 1 0-16.6Z" clip-rule="evenodd"/></clipPath><clipPath id="lgb"><circle cx="29.5" cy="53.6" r="26"/></clipPath></defs>
<g clip-path="url(#lgr)"><path d="M30 30H80V78H30Z" fill="#fff"/><g clip-path="url(#lgb)"><path d="M30 30H60V78H30Z" fill="#3a84f7"/>
<g stroke="#1a1c3b" stroke-width="1.2" fill="none"><circle cx="29.5" cy="53.6" r="10.6"/><circle cx="29.5" cy="53.6" r="15.8"/><circle cx="29.5" cy="53.6" r="20.7"/><circle cx="29.5" cy="53.6" r="26.2"/></g></g></g>
<text x="75.3" y="72.7" font-family="Liberation Sans, sans-serif" font-weight="700" font-size="74" fill="#fff" stroke="#fff" stroke-width="0.9" textLength="109" lengthAdjust="spacingAndGlyphs">rca</text></svg>
<div style="position:absolute;left:229px;top:27px;width:252px;height:54px;border:1.5px solid #b9bccb;border-radius:4px;box-sizing:border-box;"></div>
<svg style="position:absolute;left:253px;top:46px;" width="26" height="20" viewBox="0 0 26 20" fill="none"><path d="M9 16.5H3.2a1.7 1.7 0 0 1-1.7-1.7V3.7A1.7 1.7 0 0 1 3.2 2h14.6a1.7 1.7 0 0 1 1.7 1.7V6" stroke="#e6e7ee" stroke-width="2" stroke-linecap="round"/><path d="M9.5 13.5C11.2 10.6 13.6 9.2 16.3 9.2s5.1 1.4 6.8 4.3c-1.7 2.9-4.1 4.3-6.8 4.3s-5.1-1.4-6.8-4.3Z" stroke="#e6e7ee" stroke-width="1.9"/><circle cx="16.3" cy="13.5" r="1.7" fill="#e6e7ee"/></svg>
<span class="t" style="top:43.6px;font-size:22.5px;left:288px;letter-spacing:-0.28px;-webkit-text-stroke:.28px;color:#eceef6;">Select Unit</span>
<svg style="position:absolute;left:445px;top:49px;" width="15" height="11" viewBox="0 0 15 11" fill="none"><path d="M0 0H15L7.5 11Z" fill="#c9cbd6"/></svg>
<div style="position:absolute;left:1782px;top:26px;width:655px;height:56px;border:1.5px solid #c9ccd8;border-radius:4px;box-sizing:border-box;"></div>
<svg style="position:absolute;left:1802px;top:42px;" width="28" height="28" viewBox="0 0 28 28" fill="none"><circle cx="12.3" cy="12.3" r="10" stroke="#fff" stroke-width="2.6"/><path d="M19.5 19.5L25.5 25.5" stroke="#fff" stroke-width="2.8" stroke-linecap="round"/></svg>
<span class="t" style="top:41.6px;font-size:26px;left:1838px;letter-spacing:0.03px;-webkit-text-stroke:.28px;color:#f6f7fb;">Search Assets, Alerts, Vulnerabilities</span>
<span class="t" style="top:40.4px;font-size:28.5px;left:2368px;-webkit-text-stroke:.28px;color:#f6f7fb;font-family:"DejaVu Sans",sans-serif;">⌘</span>
<span class="t" style="top:42px;font-size:26px;left:2399px;-webkit-text-stroke:.28px;color:#f6f7fb;">K</span>
<svg style="position:absolute;left:2466px;top:40px;" width="34" height="30" viewBox="0 0 34 30" fill="none"><path d="M3 28V3.5H18V9H31V21.5H16V16.5H3" stroke="#eef0f6" stroke-width="2" stroke-linejoin="round" stroke-linecap="round"/><path d="M18 9V16.5H16" stroke="#eef0f6" stroke-width="2" stroke-linejoin="round"/></svg>
<svg style="position:absolute;left:2546px;top:38px;" width="40" height="32" viewBox="0 0 40 32" fill="none"><path d="M3.5 13.5L25 3.5L28.5 22L6 21.5Z" stroke="#eef0f6" stroke-width="2" stroke-linejoin="round"/><path d="M9.5 22L11 28.5L19.5 27L18.5 22" stroke="#eef0f6" stroke-width="2" stroke-linejoin="round"/><circle cx="32" cy="2" r="0" fill="#f06a6a"/></svg>
<div style="position:absolute;left:2573.7px;top:34.7px;width:9.2px;height:9.2px;border-radius:50%;background:#ec6a68;"></div>
<svg style="position:absolute;left:2624px;top:40px;" width="28" height="30" viewBox="0 0 28 30" fill="none"><path d="M3.5 22.5C6 20 6.2 17 6.2 13a7.8 7.8 0 0 1 15.6 0c0 4 .2 7 2.7 9.5Z" stroke="#eef0f6" stroke-width="1.9" stroke-linejoin="round"/><path d="M11 25.5a3 3 0 0 0 6 0" stroke="#eef0f6" stroke-width="1.9" stroke-linecap="round"/><path d="M14 5V2.5" stroke="#eef0f6" stroke-width="1.9" stroke-linecap="round"/></svg>
<div style="position:absolute;left:2647.8px;top:34.7px;width:9.2px;height:9.2px;border-radius:50%;background:#ec6a68;"></div>
<svg style="position:absolute;left:2700px;top:39px;" width="30" height="30" viewBox="0 0 30 30" fill="none"><circle cx="15" cy="15" r="12.2" stroke="#eef0f6" stroke-width="1.9"/></svg>
<span class="t" style="top:45.4px;font-size:19px;left:2709.5px;font-weight:700;color:#eef0f6;">?</span>
<svg style="position:absolute;left:2754px;top:20px;" width="68" height="68" viewBox="0 0 68 68" fill="none"><circle cx="34" cy="34" r="32" fill="#33355a"/><circle cx="34" cy="34" r="26" fill="#fff"/><circle cx="34" cy="34" r="23.2" fill="#000"/>
<clipPath id="avc"><circle cx="34" cy="34" r="23.2"/></clipPath><g clip-path="url(#avc)" fill="#fff"><ellipse cx="34" cy="28" rx="9" ry="11.5"/><path d="M29 36h10v7c5 2.5 13 3.5 15 9v8H14v-8c2-5.5 10-6.5 15-9Z"/></g></svg>
<div style="position:absolute;left:2758px;top:1677.7px;width:86px;height:86px;border-radius:50%;background:#397df4;box-shadow:0 3px 22px rgba(30,35,60,.17);"></div>
<svg style="position:absolute;left:2770.4px;top:1690.8px;" width="60" height="60" viewBox="0 0 60 60" fill="none"><defs><clipPath id="chr"><path d="M30 8.5a21.5 21.5 0 1 0 0 43a21.5 21.5 0 1 0 0-43Zm0 12a9.5 9.5 0 1 1 0 19a9.5 9.5 0 1 1 0-19Z" clip-rule="evenodd"/></clipPath><clipPath id="chb"><circle cx="3.2" cy="30" r="30"/></clipPath></defs>
<g clip-path="url(#chr)"><path d="M0 0H60V60H0Z" fill="#fff"/><g clip-path="url(#chb)" stroke="#397df4" stroke-width="1.3" fill="none"><circle cx="3.2" cy="30" r="11.4"/><circle cx="3.2" cy="30" r="17"/><circle cx="3.2" cy="30" r="22.3"/><circle cx="3.2" cy="30" r="27.6"/></g></g></svg>
</body></html>
